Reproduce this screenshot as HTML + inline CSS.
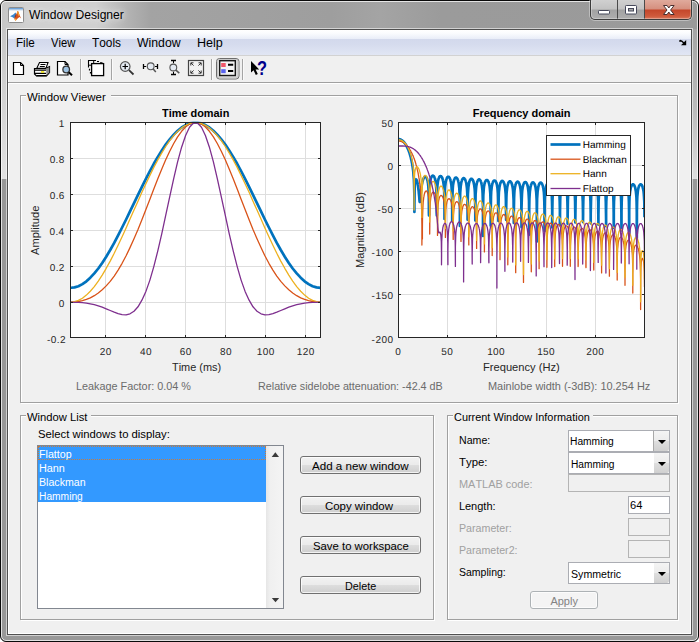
<!DOCTYPE html><html><head><meta charset="utf-8"><title>Window Designer</title><style>
*{box-sizing:border-box;margin:0;padding:0}
html,body{width:699px;height:642px;background:#fff;overflow:hidden}
body{position:relative;font-family:"Liberation Sans",sans-serif;font-size:11px;color:#000;font-kerning:none}
.a{position:absolute}
.t{position:absolute;white-space:nowrap;line-height:14px}
#win{left:0;top:0;width:699px;height:642px;border:1px solid #0a0a0a;border-radius:6px 6px 6px 6px;background:#989898;overflow:hidden}
#client{left:7px;top:29px;width:685px;height:606px;border:1px solid #505050;background:#f0f0f0}
.dis{color:#a0a0a0}
.wh{color:#fff}
.tk{color:#262626}
.gp{text-rendering:geometricPrecision}
.st{color:#6b6b6b}
.b{font-weight:bold}
.panel{border:1px solid #a0a0a0;box-shadow:1px 1px 0 #fff, inset 1px 1px 0 #fff}
.pt{background:#f0f0f0}
.btn{border:1px solid #707070;border-radius:3px;background:linear-gradient(#f2f2f2 0,#ebebeb 48%,#dddddd 52%,#cfcfcf 100%);box-shadow:inset 0 0 0 1px rgba(255,255,255,.75)}
.btnd{border:1px solid #adb2b5;border-radius:3px;background:#f4f4f4;box-shadow:inset 0 0 0 1px rgba(255,255,255,.75)}
.edit{border:1px solid #abadb3;background:#fff}
.editd{border:1px solid #b4b4b4;background:#f0f0f0}
.combo{border:1px solid #abadb3;background:#fff}
.cbtn{position:absolute;right:0;top:0;bottom:0;width:15px;border-radius:0 2px 2px 0;background:linear-gradient(#f4f4f4 0,#ececec 48%,#dedede 52%,#d0d0d0 100%)}
.cbtn.l{border-left:1px solid #a9a9a9;width:16px}
.cbtn:after{content:"";position:absolute;right:2.900px;top:8.800px;border:4.100px solid transparent;border-top:4.800px solid #000;border-bottom:0}
</style></head><body>
<div id="win" class="a">
<div class="a" style="left:0;top:0;width:697px;height:28px;background:linear-gradient(90deg,#c6c6c6 0,#d0d0d0 25px,#d0d0d0 95px,#b4b4b4 125px,#a3a3a3 150px,#9e9e9e 330px,#a4a4a4 380px,#9b9b9b 440px,#9a9a9a 100%)"></div>
<div class="a" style="left:0;top:28px;width:6px;height:150px;background:linear-gradient(#c6c6c6,#e2e2e2)"></div>
<div class="a" style="left:691px;top:28px;width:6px;height:150px;background:linear-gradient(#a4a4a4,#bcbcbc 55%,#dedede)"></div>
<div class="a" style="left:0;top:0;width:697px;height:640px;border:1px solid rgba(255,255,255,.72);border-radius:5px"></div>
<div class="a" style="left:5px;top:27px;width:687px;height:608px;border:1px solid rgba(255,255,255,.55)"></div>
</div>
<svg class="a" style="left:8px;top:7px" width="16" height="16" viewBox="0 0 16 16"><rect x=".5" y=".5" width="15" height="15" rx="1" fill="#fdfdfd" stroke="#8c8c8c"/><rect x="1" y="1" width="14" height="1.600" fill="#6fa3d8"/><rect x="1" y="2.600" width="14" height=".8" fill="#b9cfe6"/><path d="M2 9.200L5.300 7.400 7.500 5.600 8.400 7 6.300 11.500 4.600 10.200z" fill="#3a86cc"/><path d="M6.300 11.500L8.400 7 9.500 4.100 10.300 4.400 11.600 8.200 13.200 11.600 11.400 10 9.600 11.600 7.600 13.800 6.600 12.600z" fill="#d4501c"/><path d="M9 5.400L9.500 4.100 10.300 4.400 11.200 7.200 10.600 9.400 9.800 7.600z" fill="#f3a02c"/><path d="M6.600 12.600L8 11.200 8.600 12.600 7.600 13.800z" fill="#f6b63a"/><path d="M7.300 7.800L8.400 7 8 9.500 6.300 11.500z" fill="#8c3a2a"/></svg>
<div class="t" style="left:29.25px;top:8px;font-size:12px;transform:scale(1.0087,1);transform-origin:0 11px;text-shadow:0 0 5px #e8e8e8,0 0 8px #e8e8e8">Window Designer</div>
<div class="a" id="capbtns" style="left:590px;top:0;width:102px;height:20px;border:1px solid #3c3c3c;border-top:0;border-radius:0 0 5px 5px;overflow:hidden;background:linear-gradient(#d0d0d0,#c2c2c2 48%,#a2a2a2 52%,#aeaeae);box-shadow:0 0 0 1px rgba(255,255,255,.35)"><div class="a" style="left:26px;top:0;width:1px;height:19px;background:#4a4a4a"></div><div class="a" style="left:53px;top:0;width:1px;height:19px;background:#4a4a4a"></div><div class="a" style="left:54px;top:0;width:46px;height:19px;background:linear-gradient(#e0aa9c,#d58f7e 48%,#c4462a 52%,#cf5a3c 85%,#d87a5e)"></div><div class="a" style="left:0;top:1px;width:100px;height:18px;border:1px solid rgba(255,255,255,.3);border-top:0;border-radius:0 0 4px 4px"></div><svg class="a" style="left:-1px;top:0" width="102" height="19" viewBox="0 0 102 19"><rect x="8.500" y="10.500" width="11" height="3.500" rx=".8" fill="#fff" stroke="#45485a"/><rect x="35.500" y="5.500" width="11" height="8.500" rx=".8" fill="#fff" stroke="#45485a"/><rect x="38.500" y="8.500" width="5" height="2.500" fill="#a8a8a8" stroke="#45485a"/><path d="M73.500 5.500h3.600l1.700 2.500 1.700-2.500h3.600l-3.500 4.500 3.500 4.500h-3.600l-1.700-2.500-1.700 2.500h-3.600l3.500-4.500z" fill="#fff" stroke="#4a3030" stroke-width="1" stroke-linejoin="round"/></svg></div>
<div class="a" id="client"><div class="a" style="left:0;top:0;width:683px;height:604px;border:1px solid #fff"></div></div>
<div class="a" style="left:8px;top:30px;width:683px;height:25px;background:linear-gradient(#ffffff 0,#fbfcfe 12%,#e9edf8 35.900%,#d3d9ec 36%,#d6dcee 60%,#e1e6f4 100%)"></div>
<div class="a" style="left:8px;top:55px;width:683px;height:1px;background:#d2d2d2"></div>
<div class="t" style="left:15.54px;top:36px;font-size:12px;transform:scale(0.9709,1);transform-origin:0 11px;">File</div>
<div class="t" style="left:51.25px;top:36px;font-size:12px;transform:scale(0.9351,1);transform-origin:0 11px;">View</div>
<div class="t" style="left:92.33px;top:36px;font-size:12px;transform:scale(0.9881,1);transform-origin:0 11px;">Tools</div>
<div class="t" style="left:136.95px;top:36px;font-size:12px;transform:scale(1.0221,1);transform-origin:0 11px;">Window</div>
<div class="t" style="left:197.27px;top:36px;font-size:12px;transform:scale(1.0478,1);transform-origin:0 11px;">Help</div>
<svg class="a" style="left:678px;top:39px" width="9" height="7" viewBox="678 39 9 7"><path d="M679.300 41.300l1.200-.8 1.500.8 2 2" stroke="#000" stroke-width="1.400" fill="none"/><path d="M686.200 40v5.200h-5.200z" fill="#000"/></svg>
<div class="a" style="left:8px;top:82px;width:683px;height:1px;background:#a0a0a0"></div>
<div class="a" style="left:8px;top:83px;width:683px;height:1px;background:#fff"></div>
<svg class="a" id="tb" style="left:8px;top:56px" width="683" height="26" viewBox="8 56 683 26"><path d="M13.500 62.500h7l3 3v9h-10z" fill="#fff" stroke="#000" stroke-width="1.200"/><path d="M20.500 62.500v3h3" fill="none" stroke="#000"/><path d="M39.500 62.500H48L46 68.300H36.800Z" fill="#fff" stroke="#000" stroke-width="1.100"/><path d="M40.500 64.500h5M39.800 66.500h5" stroke="#000"/><path d="M34.500 68.500H45.500L49.500 66.700V72.500L46.500 76H36.500L34.500 74Z" fill="#fff" stroke="#000" stroke-width="1.200"/><path d="M46 68.700L49.300 67V72.400L46.500 75.500Z" fill="#8a8a8a"/><path d="M34.500 70.200H46M34.500 73.400H46M36.500 75.700H46.500" stroke="#000" stroke-width="1.200"/><rect x="41" y="71.200" width="3.200" height="1.500" fill="#f0e400"/><path d="M57.500 61.500h7.500l3 3v10.500h-10.500z" fill="#fff" stroke="#000" stroke-width="1.200"/><path d="M65 61.500v3h3" fill="none" stroke="#000"/><circle cx="66.200" cy="69.500" r="3.300" fill="#9fc4e4" stroke="#333" stroke-width="1.300"/><path d="M68.800 72.200l3.200 3" stroke="#000" stroke-width="2"/><path d="M80.500 59v21M111.500 59v21M211.500 59v21M242.500 59v21" stroke="#a5a5a5"/><path d="M81.500 59v21M112.500 59v21M212.500 59v21M243.500 59v21" stroke="#fafafa"/><path d="M88.500 67.500V60.500H96" stroke="#000" fill="none" stroke-width="1.100"/><path d="M93.700 60.500v3M88.500 65.200h3" stroke="#000"/><path d="M97 61.500h2M89.500 68.800v1.800M90.500 72v1.500M100 62.800h2.500" stroke="#000" stroke-width="1.200"/><rect x="91.600" y="63.600" width="12" height="12" fill="#fff" stroke="#000" stroke-width="1.300"/><circle cx="125.200" cy="66.500" r="4.800" fill="#e4eaf2" stroke="#555" stroke-width="1.200"/><path d="M122.500 66.500h5.500M125.200 63.800v5.500" stroke="#000" stroke-width="1.200"/><path d="M129 70.200l4.500 4.300" stroke="#333" stroke-width="1.800"/><circle cx="150.700" cy="66.300" r="3.400" fill="#e4eaf2" stroke="#555" stroke-width="1.100"/><path d="M153.200 69l2.600 3" stroke="#555" stroke-width="1.500"/><path d="M143.500 64v5M157.500 64v5" stroke="#000" stroke-width="1.300"/><path d="M144 66.500h2.200M155 66.500h2.200" stroke="#000"/><circle cx="173.300" cy="67.500" r="3.400" fill="#e4eaf2" stroke="#555" stroke-width="1.100"/><path d="M175.900 70.100l3.400 3" stroke="#555" stroke-width="1.500"/><path d="M171 60.500h5M171 74.500h5" stroke="#000" stroke-width="1.300"/><path d="M173.500 60.500v2.700M173.500 71.800v2.700" stroke="#000"/><rect x="188.500" y="60.500" width="15" height="15" fill="#f2f2f2" stroke="#444" stroke-width="1.200"/><path d="M190.800 65.500v-2.700h2.700M198.500 62.800h2.700v2.700M201.200 70.500v2.700h-2.700M193.500 73.200h-2.700v-2.700M191 63l2.600 2.600M201 63l-2.600 2.600M201 73l-2.600-2.600M191 73l2.600-2.600" fill="none" stroke="#222" stroke-width=".9"/><rect x="216.500" y="58.500" width="22.500" height="20.500" rx="3" fill="#d8d8d8" stroke="#6e6e6e" stroke-width="1"/><rect x="217.500" y="59.500" width="20.500" height="18.500" rx="2" fill="none" stroke="#c9c9c9" stroke-width="1"/><rect x="219.700" y="60.700" width="15.600" height="14.800" fill="#f4f4f4" stroke="#1a1a1a" stroke-width="1.400"/><rect x="221.200" y="63" width="4.500" height="4" fill="#f0586a"/><rect x="221.200" y="69.200" width="4.500" height="4" fill="#5a64f0"/><path d="M228 64.800h5.200M228 71.100h5.200" stroke="#000" stroke-width="2"/><path d="M251 61v11.500l2.600-2.300 2.200 4.800 2-1-2.200-4.600h3.600z" fill="#000"/><text x="257" y="75" textLength="10" lengthAdjust="spacingAndGlyphs" style="font:bold 20px 'Liberation Sans',sans-serif" fill="#00008c">?</text></svg>
<div class="a panel" style="left:20px;top:95px;width:658px;height:308px;"></div>
<div class="a pt" style="left:26px;top:89px;width:85px;height:12px;"></div>
<div class="t" style="left:26.85px;top:90px;font-size:11px;transform:scale(1.0388,1);transform-origin:0 11px;">Window Viewer</div>
<svg class="a" id="plots" style="left:0;top:110px" width="699" height="240" viewBox="0 110 699 240"><defs><clipPath id="c1"><rect x="71" y="121.500" width="249.500" height="216"/></clipPath><clipPath id="c2"><rect x="399" y="121.500" width="245.500" height="216"/></clipPath></defs><rect x="70.500" y="122.500" width="250" height="215" fill="#fff"/><rect x="398.500" y="122.500" width="246" height="215" fill="#fff"/><path d="M105.5 122.500V337.500M145.5 122.500V337.500M185.5 122.500V337.500M225.5 122.500V337.500M265.5 122.500V337.500M305.5 122.500V337.500M70.500 337.5H320.500M70.500 302.5H320.500M70.500 266.5H320.500M70.500 230.5H320.500M70.500 194.5H320.500M70.500 158.5H320.500M70.500 122.5H320.500M398.5 122.500V337.500M447.5 122.500V337.500M496.5 122.500V337.500M546.5 122.500V337.500M595.5 122.500V337.500M398.500 122.5H644.500M398.500 165.5H644.500M398.500 208.5H644.500M398.500 251.5H644.500M398.500 294.5H644.500M398.500 337.5H644.500" stroke="#dedede" fill="none"/><g clip-path="url(#c1)" fill="none" stroke-linejoin="round"><path d="M70.5 287.8L74.5 287.4L78.4 286.2L82.4 284.1L86.4 281.3L90.3 277.7L94.3 273.4L98.3 268.5L102.2 262.9L106.2 256.7L110.2 250.0L114.2 242.9L118.1 235.3L122.1 227.5L126.1 219.5L130.0 211.3L134.0 203.1L138.0 194.9L141.9 186.8L145.9 178.8L149.9 171.2L153.8 163.8L157.8 156.9L161.8 150.5L165.7 144.6L169.7 139.3L173.7 134.6L177.6 130.7L181.6 127.5L185.6 125.1L189.5 123.4L193.5 122.6L197.5 122.6L201.5 123.4L205.4 125.1L209.4 127.5L213.4 130.7L217.3 134.6L221.3 139.3L225.3 144.6L229.2 150.5L233.2 156.9L237.2 163.8L241.1 171.2L245.1 178.8L249.1 186.8L253.0 194.9L257.0 203.1L261.0 211.3L264.9 219.5L268.9 227.5L272.9 235.3L276.8 242.9L280.8 250.0L284.8 256.7L288.8 262.9L292.7 268.5L296.7 273.4L300.7 277.7L304.6 281.3L308.6 284.1L312.6 286.2L316.5 287.4L320.5 287.8" stroke="#0072BD" stroke-width="2.7"/><path d="M70.5 302.2L74.5 302.0L78.4 301.5L82.4 300.7L86.4 299.4L90.3 297.8L94.3 295.7L98.3 293.0L102.2 289.8L106.2 285.9L110.2 281.4L114.2 276.1L118.1 270.1L122.1 263.3L126.1 255.8L130.0 247.6L134.0 238.8L138.0 229.5L141.9 219.7L145.9 209.6L149.9 199.3L153.8 189.0L157.8 178.8L161.8 169.1L165.7 159.8L169.7 151.2L173.7 143.5L177.6 136.8L181.6 131.3L185.6 127.0L189.5 124.1L193.5 122.7L197.5 122.7L201.5 124.1L205.4 127.0L209.4 131.3L213.4 136.8L217.3 143.5L221.3 151.2L225.3 159.8L229.2 169.1L233.2 178.8L237.2 189.0L241.1 199.3L245.1 209.6L249.1 219.7L253.0 229.5L257.0 238.8L261.0 247.6L264.9 255.8L268.9 263.3L272.9 270.1L276.8 276.1L280.8 281.4L284.8 285.9L288.8 289.8L292.7 293.0L296.7 295.7L300.7 297.8L304.6 299.4L308.6 300.7L312.6 301.5L316.5 302.0L320.5 302.2" stroke="#D95319" stroke-width="1.3"/><path d="M70.5 302.2L74.5 301.7L78.4 300.4L82.4 298.2L86.4 295.1L90.3 291.2L94.3 286.6L98.3 281.1L102.2 275.1L106.2 268.3L110.2 261.1L114.2 253.3L118.1 245.2L122.1 236.7L126.1 227.9L130.0 219.0L134.0 210.1L138.0 201.2L141.9 192.3L145.9 183.7L149.9 175.4L153.8 167.4L157.8 159.9L161.8 152.9L165.7 146.5L169.7 140.7L173.7 135.7L177.6 131.4L181.6 127.9L185.6 125.3L189.5 123.5L193.5 122.6L197.5 122.6L201.5 123.5L205.4 125.3L209.4 127.9L213.4 131.4L217.3 135.7L221.3 140.7L225.3 146.5L229.2 152.9L233.2 159.9L237.2 167.4L241.1 175.4L245.1 183.7L249.1 192.3L253.0 201.2L257.0 210.1L261.0 219.0L264.9 227.9L268.9 236.7L272.9 245.2L276.8 253.3L280.8 261.1L284.8 268.3L288.8 275.1L292.7 281.1L296.7 286.6L300.7 291.2L304.6 295.1L308.6 298.2L312.6 300.4L316.5 301.7L320.5 302.2" stroke="#EDB120" stroke-width="1.3"/><path d="M70.5 302.2L74.5 302.3L78.4 302.4L82.4 302.7L86.4 303.1L90.3 303.8L94.3 304.7L98.3 305.8L102.2 307.2L106.2 308.8L110.2 310.5L114.2 312.2L118.1 313.7L122.1 314.6L126.1 314.8L130.0 313.8L134.0 311.2L138.0 306.8L141.9 300.2L145.9 291.4L149.9 280.1L153.8 266.6L157.8 250.9L161.8 233.7L165.7 215.4L169.7 196.8L173.7 178.7L177.6 161.9L181.6 147.2L185.6 135.5L189.5 127.3L193.5 123.0L197.5 123.0L201.5 127.3L205.4 135.5L209.4 147.2L213.4 161.9L217.3 178.7L221.3 196.8L225.3 215.4L229.2 233.7L233.2 250.9L237.2 266.6L241.1 280.1L245.1 291.4L249.1 300.2L253.0 306.8L257.0 311.2L261.0 313.8L264.9 314.8L268.9 314.6L272.9 313.7L276.8 312.2L280.8 310.5L284.8 308.8L288.8 307.2L292.7 305.8L296.7 304.7L300.7 303.8L304.6 303.1L308.6 302.7L312.6 302.4L316.5 302.3L320.5 302.2" stroke="#7E2F8E" stroke-width="1.3"/></g><g clip-path="url(#c2)" fill="none" stroke-linejoin="round"><path d="M398.5 139.1L398.7 139.1L399.0 139.2L399.2 139.2L399.5 139.2L399.7 139.3L399.9 139.3L400.2 139.4L400.4 139.5L400.7 139.6L400.9 139.7L401.1 139.8L401.4 140.0L401.6 140.1L401.9 140.3L402.1 140.4L402.3 140.6L402.6 140.8L402.8 141.0L403.1 141.2L403.3 141.5L403.5 141.7L403.8 142.0L404.0 142.2L404.3 142.5L404.5 142.8L404.7 143.1L405.0 143.5L405.2 143.8L405.5 144.2L405.7 144.6L405.9 144.9L406.2 145.4L406.4 145.8L406.7 146.2L406.9 146.7L407.1 147.2L407.4 147.7L407.6 148.2L407.9 148.7L408.1 149.3L408.4 149.9L408.6 150.5L408.8 151.2L409.1 151.8L409.3 152.5L409.6 153.2L409.8 154.0L410.0 154.8L410.3 155.6L410.5 156.5L410.8 157.4L411.0 158.4L411.2 159.4L411.5 160.5L411.7 161.6L412.0 162.9L412.2 164.2L412.4 165.6L412.7 167.2L412.9 168.9L413.2 170.8L413.4 173.1L413.6 175.8L413.9 179.2L414.1 184.3L414.4 196.3L414.4 200.7L414.4 212.0L414.4 205.3L414.5 198.9L414.6 190.3L414.8 184.6L415.1 182.1L415.3 180.7L415.6 179.9L415.8 179.5L416.0 179.4L416.0 179.4L416.3 179.6L416.5 179.9L416.8 180.4L417.0 181.1L417.2 181.9L417.5 183.0L417.7 184.2L418.0 185.6L418.2 187.2L418.4 189.1L418.7 191.2L418.9 193.7L419.2 196.4L419.4 199.2L419.6 201.4L419.8 201.9L419.8 201.9L419.8 201.9L419.9 201.9L419.9 201.9L420.1 200.4L420.4 197.9L420.6 195.1L420.8 192.6L421.1 190.3L421.3 188.3L421.6 186.6L421.8 185.1L422.0 183.8L422.3 182.6L422.5 181.6L422.8 180.7L423.0 179.9L423.2 179.2L423.5 178.6L423.7 178.1L424.0 177.7L424.2 177.3L424.4 177.0L424.7 176.8L424.9 176.7L425.2 176.6L425.3 176.6L425.4 176.6L425.6 176.7L425.9 176.9L426.1 177.1L426.4 177.4L426.6 177.9L426.9 178.4L427.1 179.1L427.3 179.9L427.6 180.9L427.8 182.2L428.1 183.8L428.3 186.1L428.5 189.4L428.8 196.0L428.9 205.4L428.9 212.9L429.0 215.4L429.0 206.2L429.0 202.2L429.3 191.3L429.5 187.1L429.7 184.4L430.0 182.5L430.2 181.1L430.5 179.9L430.7 178.9L430.9 178.2L431.2 177.5L431.4 177.0L431.7 176.6L431.9 176.2L432.1 176.0L432.4 175.8L432.6 175.7L432.9 175.6L433.1 175.7L433.3 175.8L433.6 176.0L433.8 176.2L434.1 176.6L434.3 177.0L434.5 177.5L434.8 178.2L435.0 179.0L435.3 180.0L435.5 181.1L435.7 182.6L436.0 184.6L436.2 187.3L436.5 191.8L436.7 205.3L436.7 212.7L436.8 215.4L436.8 206.2L436.8 202.2L436.9 194.9L437.2 188.9L437.4 185.6L437.7 183.4L437.9 181.8L438.1 180.6L438.4 179.5L438.6 178.7L438.9 178.0L439.1 177.5L439.3 177.0L439.6 176.7L439.8 176.4L440.1 176.2L440.3 176.1L440.5 176.1L440.8 176.1L441.0 176.2L441.3 176.4L441.5 176.6L441.7 177.0L442.0 177.4L442.2 177.9L442.5 178.6L442.7 179.3L442.9 180.3L443.2 181.4L443.4 182.8L443.7 184.7L443.9 187.2L444.2 191.2L444.4 200.4L444.4 203.2L444.5 207.5L444.5 218.9L444.5 211.7L444.5 205.2L444.6 197.7L444.9 190.4L445.1 186.8L445.4 184.5L445.6 182.7L445.8 181.4L446.1 180.4L446.3 179.5L446.6 178.8L446.8 178.2L447.0 177.8L447.3 177.4L447.5 177.1L447.8 176.9L448.0 176.8L448.2 176.8L448.3 176.8L448.5 176.8L448.7 176.9L449.0 177.0L449.2 177.3L449.4 177.6L449.7 178.0L449.9 178.5L450.2 179.2L450.4 179.9L450.6 180.8L450.9 182.0L451.1 183.3L451.4 185.1L451.6 187.6L451.8 191.3L452.1 199.2L452.1 204.0L452.2 208.4L452.2 220.8L452.2 212.0L452.3 205.8L452.3 200.1L452.6 191.7L452.8 187.9L453.0 185.4L453.3 183.6L453.5 182.3L453.8 181.2L454.0 180.3L454.2 179.6L454.5 179.0L454.7 178.5L455.0 178.2L455.2 177.9L455.4 177.7L455.7 177.5L455.9 177.5L456.0 177.5L456.2 177.5L456.4 177.6L456.6 177.8L456.9 178.0L457.1 178.3L457.4 178.7L457.6 179.2L457.8 179.8L458.1 180.6L458.3 181.5L458.6 182.6L458.8 183.9L459.0 185.7L459.3 188.1L459.5 191.6L459.8 198.9L459.9 206.0L459.9 211.8L459.9 226.0L459.9 209.8L460.0 205.1L460.0 202.2L460.2 192.8L460.5 188.8L460.7 186.3L461.0 184.5L461.2 183.1L461.4 182.0L461.7 181.1L461.9 180.3L462.2 179.7L462.4 179.3L462.7 178.9L462.9 178.6L463.1 178.4L463.4 178.2L463.6 178.2L463.7 178.2L463.9 178.2L464.1 178.3L464.3 178.4L464.6 178.7L464.8 179.0L465.1 179.4L465.3 179.9L465.5 180.5L465.8 181.2L466.0 182.1L466.3 183.2L466.5 184.5L466.7 186.2L467.0 188.6L467.2 192.0L467.5 198.9L467.5 205.1L467.6 209.3L467.6 219.7L467.6 214.4L467.7 207.6L467.7 204.1L467.9 193.8L468.2 189.6L468.4 187.1L468.7 185.2L468.9 183.8L469.1 182.7L469.4 181.8L469.6 181.0L469.9 180.4L470.1 179.9L470.3 179.6L470.6 179.3L470.8 179.0L471.1 178.9L471.3 178.8L471.4 178.8L471.5 178.8L471.8 178.9L472.0 179.1L472.3 179.3L472.5 179.6L472.7 180.0L473.0 180.5L473.2 181.1L473.5 181.8L473.7 182.7L473.9 183.7L474.2 185.1L474.4 186.8L474.7 189.1L474.9 192.5L475.1 199.0L475.3 208.1L475.3 214.9L475.3 220.5L475.4 209.9L475.4 205.7L475.6 194.6L475.9 190.4L476.1 187.8L476.3 185.9L476.6 184.5L476.8 183.3L477.1 182.4L477.3 181.7L477.5 181.1L477.8 180.6L478.0 180.2L478.3 179.9L478.5 179.6L478.7 179.5L479.0 179.4L479.1 179.4L479.2 179.4L479.5 179.5L479.7 179.6L479.9 179.9L480.2 180.2L480.4 180.6L480.7 181.0L480.9 181.6L481.2 182.4L481.4 183.2L481.6 184.3L481.9 185.6L482.1 187.3L482.4 189.5L482.6 192.9L482.8 199.2L483.0 207.6L483.0 212.9L483.0 235.9L483.0 212.3L483.1 207.2L483.3 195.4L483.6 191.1L483.8 188.4L484.0 186.5L484.3 185.1L484.5 183.9L484.8 183.0L485.0 182.2L485.2 181.6L485.5 181.1L485.7 180.7L486.0 180.4L486.2 180.2L486.4 180.0L486.7 180.0L486.8 180.0L486.9 180.0L487.2 180.0L487.4 180.2L487.6 180.4L487.9 180.7L488.1 181.1L488.4 181.6L488.6 182.1L488.8 182.9L489.1 183.7L489.3 184.8L489.6 186.1L489.8 187.8L490.0 190.0L490.3 193.3L490.5 199.5L490.6 207.3L490.7 211.8L490.7 225.7L490.7 214.6L490.8 208.6L491.0 196.1L491.2 191.7L491.5 189.0L491.7 187.1L492.0 185.6L492.2 184.5L492.4 183.5L492.7 182.8L492.9 182.2L493.2 181.6L493.4 181.2L493.6 180.9L493.9 180.7L494.1 180.5L494.4 180.5L494.5 180.5L494.6 180.5L494.8 180.5L495.1 180.7L495.3 180.9L495.6 181.2L495.8 181.6L496.0 182.0L496.3 182.6L496.5 183.3L496.8 184.2L497.0 185.2L497.2 186.5L497.5 188.2L497.7 190.4L498.0 193.7L498.2 199.7L498.3 207.1L498.4 211.2L498.4 220.9L498.4 217.1L498.4 209.9L498.7 196.7L498.9 192.2L499.2 189.5L499.4 187.6L499.7 186.1L499.9 185.0L500.1 184.0L500.4 183.3L500.6 182.6L500.9 182.1L501.1 181.7L501.3 181.4L501.6 181.2L501.8 181.0L502.1 180.9L502.2 180.9L502.3 180.9L502.5 181.0L502.8 181.1L503.0 181.3L503.3 181.6L503.5 182.0L503.7 182.5L504.0 183.0L504.2 183.8L504.5 184.6L504.7 185.6L504.9 186.9L505.2 188.6L505.4 190.8L505.7 194.0L505.9 200.0L506.0 210.8L506.1 218.6L506.1 219.8L506.1 211.2L506.2 207.3L506.4 197.2L506.6 192.7L506.9 190.0L507.1 188.0L507.3 186.6L507.6 185.4L507.8 184.5L508.1 183.7L508.3 183.1L508.5 182.5L508.8 182.1L509.0 181.8L509.3 181.6L509.5 181.4L509.7 181.3L509.9 181.3L510.0 181.3L510.2 181.4L510.5 181.5L510.7 181.7L510.9 182.0L511.2 182.4L511.4 182.9L511.7 183.4L511.9 184.1L512.1 185.0L512.4 186.0L512.6 187.3L512.9 189.0L513.1 191.1L513.3 194.3L513.6 200.2L513.7 210.5L513.8 217.2L513.8 223.0L513.8 212.4L513.9 208.1L514.1 197.8L514.3 193.2L514.5 190.4L514.8 188.5L515.0 187.0L515.3 185.8L515.5 184.9L515.7 184.1L516.0 183.5L516.2 182.9L516.5 182.5L516.7 182.2L516.9 182.0L517.2 181.8L517.4 181.7L517.6 181.7L517.7 181.7L517.9 181.8L518.2 181.9L518.4 182.1L518.6 182.4L518.9 182.8L519.1 183.2L519.4 183.8L519.6 184.5L519.8 185.3L520.1 186.4L520.3 187.7L520.6 189.3L520.8 191.5L521.0 194.6L521.3 200.4L521.4 210.3L521.5 216.3L521.5 227.3L521.5 213.5L521.5 208.9L521.8 198.2L522.0 193.6L522.2 190.8L522.5 188.8L522.7 187.4L523.0 186.2L523.2 185.2L523.4 184.5L523.7 183.8L523.9 183.3L524.2 182.9L524.4 182.6L524.6 182.3L524.9 182.2L525.1 182.1L525.3 182.1L525.4 182.1L525.6 182.1L525.8 182.2L526.1 182.4L526.3 182.7L526.6 183.1L526.8 183.6L527.0 184.1L527.3 184.8L527.5 185.7L527.8 186.7L528.0 188.0L528.2 189.6L528.5 191.8L528.7 194.9L529.0 200.6L529.1 210.2L529.1 215.7L529.2 234.6L529.2 214.6L529.2 209.6L529.4 198.6L529.7 194.0L529.9 191.2L530.2 189.2L530.4 187.7L530.6 186.5L530.9 185.6L531.1 184.8L531.4 184.1L531.6 183.6L531.8 183.2L532.1 182.9L532.3 182.6L532.6 182.5L532.8 182.4L533.0 182.4L533.0 182.4L533.3 182.4L533.5 182.6L533.8 182.8L534.0 183.0L534.2 183.4L534.5 183.9L534.7 184.4L535.0 185.1L535.2 186.0L535.5 187.0L535.7 188.3L535.9 189.9L536.2 192.0L536.4 195.2L536.7 200.8L536.8 210.1L536.8 215.2L536.9 241.4L536.9 215.6L536.9 210.3L537.1 199.0L537.4 194.3L537.6 191.5L537.9 189.5L538.1 188.0L538.3 186.8L538.6 185.9L538.8 185.1L539.1 184.4L539.3 183.9L539.5 183.5L539.8 183.2L540.0 182.9L540.3 182.8L540.5 182.7L540.7 182.7L540.7 182.7L541.0 182.7L541.2 182.8L541.5 183.0L541.7 183.3L541.9 183.7L542.2 184.1L542.4 184.7L542.7 185.4L542.9 186.2L543.1 187.3L543.4 188.5L543.6 190.1L543.9 192.3L544.1 195.4L544.3 201.0L544.5 210.0L544.5 214.8L544.5 231.1L544.6 216.7L544.6 211.0L544.8 199.4L545.1 194.6L545.3 191.8L545.5 189.8L545.8 188.3L546.0 187.1L546.3 186.1L546.5 185.4L546.7 184.7L547.0 184.2L547.2 183.8L547.5 183.4L547.7 183.2L547.9 183.0L548.2 182.9L548.4 182.9L548.4 182.9L548.7 183.0L548.9 183.1L549.1 183.3L549.4 183.6L549.6 183.9L549.9 184.4L550.1 185.0L550.3 185.6L550.6 186.5L550.8 187.5L551.1 188.8L551.3 190.4L551.5 192.5L551.8 195.6L552.0 201.2L552.2 210.0L552.2 214.5L552.2 227.4L552.3 217.7L552.3 211.6L552.5 199.7L552.7 194.9L553.0 192.1L553.2 190.1L553.5 188.6L553.7 187.4L554.0 186.4L554.2 185.6L554.4 185.0L554.7 184.4L554.9 184.0L555.2 183.7L555.4 183.4L555.6 183.3L555.9 183.2L556.1 183.1L556.1 183.2L556.4 183.2L556.6 183.3L556.8 183.5L557.1 183.8L557.3 184.2L557.6 184.6L557.8 185.2L558.0 185.9L558.3 186.7L558.5 187.7L558.8 189.0L559.0 190.6L559.2 192.7L559.5 195.8L559.7 201.3L559.9 209.9L559.9 214.2L559.9 225.2L560.0 218.8L560.0 212.2L560.2 200.0L560.4 195.2L560.7 192.3L560.9 190.3L561.2 188.8L561.4 187.6L561.6 186.6L561.9 185.8L562.1 185.2L562.4 184.7L562.6 184.2L562.8 183.9L563.1 183.7L563.3 183.5L563.6 183.4L563.8 183.4L563.8 183.4L564.0 183.4L564.3 183.5L564.5 183.7L564.8 184.0L565.0 184.4L565.2 184.8L565.5 185.4L565.7 186.1L566.0 186.9L566.2 187.9L566.4 189.2L566.7 190.8L566.9 192.9L567.2 196.0L567.4 201.4L567.6 209.9L567.6 214.0L567.6 223.7L567.6 219.8L567.7 212.7L567.9 200.3L568.1 195.4L568.4 192.5L568.6 190.5L568.8 189.0L569.1 187.8L569.3 186.8L569.6 186.0L569.8 185.4L570.0 184.9L570.3 184.4L570.5 184.1L570.8 183.8L571.0 183.7L571.2 183.6L571.5 183.5L571.5 183.6L571.7 183.6L572.0 183.7L572.2 183.9L572.5 184.2L572.7 184.5L572.9 185.0L573.2 185.6L573.4 186.2L573.7 187.1L573.9 188.1L574.1 189.3L574.4 190.9L574.6 193.0L574.9 196.1L575.1 201.5L575.2 209.8L575.3 213.8L575.3 222.5L575.3 220.9L575.4 213.2L575.6 200.5L575.8 195.6L576.1 192.7L576.3 190.7L576.5 189.2L576.8 188.0L577.0 187.0L577.3 186.2L577.5 185.6L577.7 185.0L578.0 184.6L578.2 184.3L578.5 184.0L578.7 183.8L578.9 183.7L579.1 183.7L579.2 183.7L579.4 183.8L579.7 183.9L579.9 184.1L580.1 184.3L580.4 184.7L580.6 185.2L580.9 185.7L581.1 186.4L581.3 187.2L581.6 188.2L581.8 189.5L582.1 191.1L582.3 193.2L582.5 196.2L582.8 201.6L583.0 213.6L583.0 221.6L583.0 222.1L583.1 213.7L583.1 209.9L583.3 200.7L583.5 195.8L583.7 192.9L584.0 190.9L584.2 189.4L584.5 188.1L584.7 187.2L584.9 186.4L585.2 185.7L585.4 185.2L585.7 184.8L585.9 184.4L586.1 184.2L586.4 184.0L586.6 183.9L586.8 183.9L586.9 183.9L587.1 183.9L587.3 184.0L587.6 184.2L587.8 184.5L588.1 184.8L588.3 185.3L588.5 185.9L588.8 186.5L589.0 187.4L589.3 188.4L589.5 189.6L589.7 191.2L590.0 193.3L590.2 196.3L590.5 201.7L590.7 213.4L590.7 220.9L590.7 223.3L590.7 214.2L590.8 210.2L591.0 200.9L591.2 196.0L591.4 193.1L591.7 191.0L591.9 189.5L592.2 188.3L592.4 187.3L592.6 186.5L592.9 185.9L593.1 185.3L593.4 184.9L593.6 184.6L593.8 184.3L594.1 184.1L594.3 184.0L594.5 184.0L594.6 184.0L594.8 184.0L595.0 184.2L595.3 184.3L595.5 184.6L595.8 185.0L596.0 185.4L596.2 186.0L596.5 186.6L596.7 187.5L597.0 188.5L597.2 189.7L597.4 191.3L597.7 193.4L597.9 196.4L598.2 201.7L598.3 213.2L598.4 220.2L598.4 224.7L598.4 214.7L598.5 210.5L598.6 201.1L598.9 196.1L599.1 193.2L599.4 191.2L599.6 189.6L599.8 188.4L600.1 187.4L600.3 186.6L600.6 186.0L600.8 185.4L601.0 185.0L601.3 184.7L601.5 184.4L601.8 184.2L602.0 184.1L602.2 184.1L602.2 184.1L602.5 184.1L602.7 184.3L603.0 184.4L603.2 184.7L603.4 185.1L603.7 185.5L603.9 186.1L604.2 186.7L604.4 187.6L604.6 188.6L604.9 189.8L605.1 191.4L605.4 193.5L605.6 196.5L605.8 201.8L606.0 213.0L606.1 219.6L606.1 226.2L606.1 215.1L606.1 210.8L606.3 201.2L606.6 196.2L606.8 193.3L607.0 191.3L607.3 189.7L607.5 188.5L607.8 187.5L608.0 186.7L608.2 186.1L608.5 185.5L608.7 185.1L609.0 184.8L609.2 184.5L609.5 184.3L609.7 184.2L609.9 184.2L609.9 184.2L610.2 184.2L610.4 184.3L610.7 184.5L610.9 184.8L611.1 185.2L611.4 185.6L611.6 186.1L611.9 186.8L612.1 187.6L612.3 188.6L612.6 189.9L612.8 191.4L613.1 193.5L613.3 196.5L613.5 201.8L613.7 212.8L613.7 219.1L613.8 228.0L613.8 215.5L613.8 211.1L614.0 201.4L614.3 196.3L614.5 193.4L614.7 191.4L615.0 189.8L615.2 188.6L615.5 187.6L615.7 186.8L615.9 186.2L616.2 185.6L616.4 185.2L616.7 184.8L616.9 184.6L617.1 184.4L617.4 184.3L617.6 184.3L617.9 184.3L618.1 184.4L618.3 184.6L618.6 184.9L618.8 185.2L619.1 185.7L619.3 186.2L619.5 186.9L619.8 187.7L620.0 188.7L620.3 189.9L620.5 191.5L620.7 193.6L621.0 196.6L621.2 201.8L621.4 212.7L621.4 218.6L621.5 230.3L621.5 216.0L621.5 211.4L621.7 201.5L621.9 196.4L622.2 193.5L622.4 191.4L622.7 189.9L622.9 188.7L623.1 187.7L623.4 186.9L623.6 186.2L623.9 185.7L624.1 185.2L624.3 184.9L624.6 184.6L624.8 184.5L625.1 184.3L625.3 184.3L625.5 184.4L625.8 184.5L626.0 184.6L626.3 184.9L626.5 185.3L626.8 185.7L627.0 186.3L627.2 186.9L627.5 187.7L627.7 188.7L628.0 190.0L628.2 191.5L628.4 193.6L628.7 196.6L628.9 201.8L629.1 212.5L629.1 218.1L629.2 233.4L629.2 216.4L629.2 211.6L629.4 201.6L629.6 196.5L629.9 193.5L630.1 191.5L630.4 189.9L630.6 188.7L630.8 187.7L631.1 186.9L631.3 186.3L631.6 185.7L631.8 185.3L632.0 184.9L632.3 184.7L632.5 184.5L632.8 184.4L633.0 184.3L633.2 184.4L633.5 184.5L633.7 184.7L634.0 184.9L634.2 185.3L634.4 185.7L634.7 186.3L634.9 186.9L635.2 187.8L635.4 188.8L635.6 190.0L635.9 191.5L636.1 193.6L636.4 196.6L636.6 201.8L636.8 212.3L636.8 217.7L636.8 238.6L636.9 216.8L636.9 211.8L637.1 201.7L637.3 196.5L637.6 193.6L637.8 191.5L638.0 190.0L638.3 188.7L638.5 187.8L638.8 186.9L639.0 186.3L639.2 185.7L639.5 185.3L639.7 185.0L640.0 184.7L640.2 184.5L640.4 184.4L640.7 184.4L640.9 184.4L641.2 184.5L641.4 184.7L641.6 185.0L641.9 185.3L642.1 185.7L642.4 186.3L642.6 187.0L642.8 187.8L643.1 188.8L643.3 190.0L643.6 191.5L643.8 193.6L644.0 196.6L644.3 201.7L644.5 217.2" stroke="#0072BD" stroke-width="2.7"/><path d="M398.5 141.0L398.7 141.0L399.0 141.0L399.2 141.1L399.5 141.1L399.7 141.1L399.9 141.2L400.2 141.2L400.4 141.3L400.7 141.3L400.9 141.4L401.1 141.5L401.4 141.5L401.6 141.6L401.9 141.7L402.1 141.8L402.3 141.9L402.6 142.1L402.8 142.2L403.1 142.3L403.3 142.5L403.5 142.6L403.8 142.8L404.0 142.9L404.3 143.1L404.5 143.3L404.7 143.5L405.0 143.7L405.2 143.9L405.5 144.1L405.7 144.3L405.9 144.5L406.2 144.8L406.4 145.0L406.7 145.3L406.9 145.5L407.1 145.8L407.4 146.1L407.6 146.4L407.9 146.7L408.1 147.0L408.4 147.3L408.6 147.7L408.8 148.0L409.1 148.3L409.3 148.7L409.6 149.1L409.8 149.5L410.0 149.9L410.3 150.3L410.5 150.7L410.8 151.1L411.0 151.5L411.2 152.0L411.5 152.5L411.7 152.9L412.0 153.4L412.2 153.9L412.4 154.5L412.7 155.0L412.9 155.6L413.2 156.1L413.4 156.7L413.6 157.3L413.9 157.9L414.1 158.6L414.4 159.2L414.6 159.9L414.8 160.6L415.1 161.4L415.3 162.1L415.6 162.9L415.8 163.7L416.0 164.5L416.3 165.4L416.5 166.3L416.8 167.2L417.0 168.2L417.2 169.2L417.5 170.2L417.7 171.3L418.0 172.5L418.2 173.7L418.4 174.9L418.7 176.3L418.9 177.7L419.2 179.2L419.4 180.9L419.6 182.6L419.9 184.5L420.1 186.6L420.4 188.9L420.6 191.6L420.8 194.6L421.1 198.2L421.3 202.7L421.6 208.9L421.8 220.0L421.9 225.8L421.9 230.9L421.9 245.1L422.0 234.9L422.0 229.6L422.0 225.4L422.1 223.8L422.3 228.2L422.3 231.4L422.3 239.0L422.4 238.9L422.4 230.2L422.5 219.0L422.8 210.3L423.0 205.4L423.2 202.1L423.5 199.6L423.7 197.7L424.0 196.2L424.2 194.9L424.4 193.9L424.7 193.1L424.9 192.5L425.2 191.9L425.4 191.5L425.6 191.3L425.9 191.1L426.1 191.0L426.2 191.0L426.4 191.0L426.6 191.1L426.9 191.4L427.1 191.7L427.3 192.1L427.6 192.6L427.8 193.3L428.1 194.1L428.3 195.1L428.5 196.3L428.8 197.9L429.0 200.0L429.3 203.0L429.5 208.1L429.7 217.8L429.7 222.2L429.7 234.1L429.8 226.1L429.8 219.7L430.0 208.7L430.2 203.5L430.5 200.5L430.7 198.5L430.9 197.0L431.2 195.8L431.4 194.9L431.7 194.2L431.9 193.6L432.1 193.1L432.4 192.7L432.6 192.5L432.9 192.3L433.1 192.2L433.3 192.1L433.3 192.1L433.6 192.2L433.8 192.3L434.1 192.5L434.3 192.7L434.5 193.1L434.8 193.5L435.0 194.0L435.3 194.6L435.5 195.3L435.7 196.1L436.0 197.1L436.2 198.3L436.5 199.8L436.7 201.7L436.9 204.2L437.2 208.0L437.4 215.9L437.5 220.5L437.5 224.8L437.5 235.4L437.6 229.7L437.6 223.0L437.7 217.2L437.9 208.7L438.1 204.9L438.4 202.5L438.6 200.9L438.9 199.6L439.1 198.6L439.3 197.7L439.6 197.1L439.8 196.6L440.1 196.2L440.3 195.9L440.5 195.7L440.8 195.5L441.0 195.5L441.1 195.5L441.3 195.5L441.5 195.6L441.7 195.7L442.0 196.0L442.2 196.3L442.5 196.6L442.7 197.1L442.9 197.6L443.2 198.3L443.4 199.1L443.7 200.0L443.9 201.1L444.2 202.4L444.4 204.0L444.6 206.2L444.9 209.2L445.1 214.2L445.3 223.7L445.3 227.8L445.4 237.4L445.4 233.8L445.4 226.6L445.6 215.1L445.8 209.9L446.1 207.0L446.3 205.0L446.6 203.5L446.8 202.4L447.0 201.4L447.3 200.7L447.5 200.1L447.8 199.7L448.0 199.3L448.2 199.1L448.5 198.9L448.7 198.8L449.0 198.7L449.2 198.8L449.4 198.9L449.7 199.1L449.9 199.3L450.2 199.6L450.4 200.0L450.6 200.5L450.9 201.1L451.1 201.8L451.4 202.6L451.6 203.6L451.8 204.8L452.1 206.3L452.3 208.1L452.6 210.6L452.8 214.4L453.0 222.1L453.1 226.6L453.1 230.5L453.2 239.4L453.2 237.7L453.2 230.0L453.3 223.9L453.5 215.2L453.8 211.4L454.0 209.0L454.2 207.3L454.5 205.9L454.7 204.9L455.0 204.1L455.2 203.4L455.4 202.9L455.7 202.5L455.9 202.2L456.2 201.9L456.4 201.8L456.6 201.7L456.8 201.7L456.9 201.7L457.1 201.8L457.4 201.9L457.6 202.1L457.8 202.4L458.1 202.7L458.3 203.2L458.6 203.7L458.8 204.3L459.0 205.1L459.3 206.0L459.5 207.0L459.8 208.3L460.0 209.9L460.2 212.1L460.5 215.0L460.7 220.0L460.9 233.0L461.0 241.1L461.0 241.4L461.0 233.1L461.1 229.3L461.2 221.1L461.4 215.8L461.7 212.8L461.9 210.8L462.2 209.3L462.4 208.1L462.7 207.2L462.9 206.5L463.1 205.9L463.4 205.4L463.6 205.0L463.9 204.7L464.1 204.5L464.3 204.4L464.6 204.4L464.6 204.3L464.8 204.4L465.1 204.5L465.3 204.6L465.5 204.9L465.8 205.2L466.0 205.5L466.3 206.0L466.5 206.6L466.7 207.3L467.0 208.1L467.2 209.0L467.5 210.2L467.7 211.6L467.9 213.4L468.2 215.9L468.4 219.6L468.7 227.2L468.7 235.2L468.8 242.8L468.8 244.9L468.8 236.0L468.9 232.0L468.9 229.4L469.1 220.5L469.4 216.7L469.6 214.3L469.9 212.5L470.1 211.2L470.3 210.1L470.6 209.3L470.8 208.6L471.1 208.1L471.3 207.6L471.5 207.3L471.8 207.0L472.0 206.9L472.3 206.8L472.5 206.7L472.5 206.7L472.7 206.8L473.0 206.9L473.2 207.1L473.5 207.4L473.7 207.7L473.9 208.1L474.2 208.6L474.4 209.2L474.7 210.0L474.9 210.8L475.1 211.9L475.4 213.2L475.6 214.8L475.9 216.9L476.1 219.8L476.3 224.7L476.6 237.2L476.6 244.3L476.6 248.4L476.6 238.6L476.7 234.5L476.8 226.0L477.1 220.6L477.3 217.6L477.5 215.6L477.8 214.1L478.0 212.9L478.3 211.9L478.5 211.2L478.7 210.5L479.0 210.1L479.2 209.7L479.5 209.4L479.7 209.1L479.9 209.0L480.2 208.9L480.3 208.9L480.4 208.9L480.7 209.0L480.9 209.2L481.2 209.4L481.4 209.7L481.6 210.0L481.9 210.5L482.1 211.1L482.4 211.7L482.6 212.5L482.8 213.5L483.1 214.6L483.3 216.0L483.6 217.8L483.8 220.3L484.0 223.9L484.3 231.4L484.4 239.0L484.4 245.7L484.4 251.9L484.5 241.0L484.5 236.8L484.5 234.1L484.8 225.0L485.0 221.1L485.2 218.6L485.5 216.8L485.7 215.5L486.0 214.4L486.2 213.6L486.4 212.9L486.7 212.3L486.9 211.9L487.2 211.5L487.4 211.3L487.6 211.1L487.9 211.0L488.1 210.9L488.4 211.0L488.6 211.1L488.8 211.3L489.1 211.5L489.3 211.8L489.6 212.2L489.8 212.7L490.0 213.3L490.3 214.1L490.5 214.9L490.8 216.0L491.0 217.2L491.2 218.8L491.5 220.9L491.7 223.8L492.0 228.6L492.2 240.7L492.2 246.9L492.2 255.6L492.3 243.3L492.3 238.9L492.4 230.2L492.7 224.7L492.9 221.7L493.2 219.6L493.4 218.0L493.6 216.8L493.9 215.9L494.1 215.1L494.4 214.5L494.6 214.0L494.8 213.6L495.1 213.3L495.3 213.0L495.6 212.9L495.8 212.8L495.9 212.8L496.0 212.8L496.3 212.9L496.5 213.0L496.8 213.2L497.0 213.5L497.2 213.9L497.5 214.3L497.7 214.8L498.0 215.5L498.2 216.3L498.4 217.2L498.7 218.3L498.9 219.7L499.2 221.5L499.4 223.9L499.7 227.6L499.9 234.9L500.0 242.2L500.0 248.1L500.0 259.7L500.1 245.5L500.1 240.9L500.1 238.1L500.4 228.8L500.6 224.8L500.9 222.3L501.1 220.5L501.3 219.2L501.6 218.1L501.8 217.2L502.1 216.5L502.3 216.0L502.5 215.5L502.8 215.1L503.0 214.9L503.3 214.7L503.5 214.6L503.7 214.5L503.8 214.5L504.0 214.6L504.2 214.6L504.5 214.8L504.7 215.1L504.9 215.4L505.2 215.8L505.4 216.3L505.7 216.9L505.9 217.6L506.1 218.4L506.4 219.4L506.6 220.7L506.9 222.3L507.1 224.3L507.3 227.2L507.6 232.0L507.8 243.6L507.8 249.2L507.8 264.8L507.9 247.6L507.9 242.8L508.1 233.8L508.3 228.2L508.5 225.1L508.8 223.0L509.0 221.5L509.3 220.3L509.5 219.3L509.7 218.5L510.0 217.9L510.2 217.4L510.5 217.0L510.7 216.6L510.9 216.4L511.2 216.2L511.4 216.2L511.6 216.1L511.7 216.2L511.9 216.2L512.1 216.3L512.4 216.5L512.6 216.8L512.9 217.2L513.1 217.6L513.3 218.1L513.6 218.8L513.8 219.6L514.1 220.5L514.3 221.6L514.5 223.0L514.8 224.8L515.0 227.2L515.3 230.8L515.5 238.0L515.6 244.9L515.6 250.3L515.7 272.7L515.7 249.6L515.7 244.6L515.7 241.6L516.0 232.1L516.2 228.1L516.5 225.6L516.7 223.8L516.9 222.4L517.2 221.3L517.4 220.5L517.7 219.7L517.9 219.2L518.2 218.7L518.4 218.3L518.6 218.1L518.9 217.9L519.1 217.7L519.4 217.7L519.4 217.7L519.6 217.7L519.8 217.8L520.1 218.0L520.3 218.2L520.6 218.5L520.8 218.9L521.0 219.4L521.3 220.0L521.5 220.7L521.8 221.5L522.0 222.5L522.2 223.8L522.5 225.3L522.7 227.3L523.0 230.2L523.2 235.0L523.4 246.2L523.4 251.3L523.5 282.4L523.5 251.5L523.5 246.3L523.7 236.9L523.9 231.3L524.2 228.2L524.4 226.1L524.6 224.6L524.9 223.3L525.1 222.4L525.4 221.6L525.6 220.9L525.8 220.4L526.1 220.0L526.3 219.6L526.6 219.4L526.8 219.2L527.0 219.2L527.2 219.1L527.3 219.1L527.5 219.2L527.8 219.3L528.0 219.5L528.2 219.8L528.5 220.1L528.7 220.6L529.0 221.1L529.2 221.7L529.4 222.5L529.7 223.4L529.9 224.5L530.2 225.9L530.4 227.7L530.6 230.0L530.9 233.6L531.1 240.7L531.2 247.4L531.2 252.3L531.3 271.8L531.3 253.5L531.3 248.0L531.4 244.9L531.6 235.1L531.8 231.0L532.1 228.5L532.3 226.7L532.6 225.3L532.8 224.2L533.0 223.4L533.3 222.6L533.5 222.0L533.8 221.6L534.0 221.2L534.2 220.9L534.5 220.7L534.7 220.6L535.0 220.5L535.0 220.5L535.2 220.6L535.5 220.6L535.7 220.8L535.9 221.0L536.2 221.3L536.4 221.7L536.7 222.2L536.9 222.8L537.1 223.5L537.4 224.3L537.6 225.3L537.9 226.5L538.1 228.1L538.3 230.1L538.6 233.0L538.8 237.7L539.0 248.5L539.1 253.2L539.1 268.7L539.1 255.4L539.1 249.6L539.3 239.9L539.5 234.2L539.8 231.1L540.0 228.9L540.3 227.4L540.5 226.1L540.7 225.1L541.0 224.3L541.2 223.7L541.5 223.2L541.7 222.7L541.9 222.4L542.2 222.2L542.4 222.0L542.7 221.9L542.8 221.9L542.9 221.9L543.1 221.9L543.4 222.1L543.6 222.2L543.9 222.5L544.1 222.8L544.3 223.3L544.6 223.8L544.8 224.4L545.1 225.2L545.3 226.1L545.5 227.2L545.8 228.6L546.0 230.3L546.3 232.7L546.5 236.2L546.7 243.2L546.8 249.6L546.9 254.1L546.9 267.3L546.9 257.3L547.0 251.2L547.0 247.9L547.2 237.8L547.5 233.8L547.7 231.2L547.9 229.4L548.2 228.0L548.4 226.9L548.7 226.0L548.9 225.3L549.1 224.7L549.4 224.3L549.6 223.9L549.9 223.6L550.1 223.4L550.3 223.3L550.6 223.2L550.7 223.2L550.8 223.2L551.1 223.3L551.3 223.4L551.5 223.7L551.8 224.0L552.0 224.4L552.3 224.8L552.5 225.4L552.7 226.1L553.0 226.9L553.2 227.9L553.5 229.2L553.7 230.7L554.0 232.7L554.2 235.5L554.4 240.2L554.6 250.7L554.7 255.1L554.7 266.6L554.7 259.2L554.8 252.8L554.9 242.6L555.2 236.9L555.4 233.7L555.6 231.6L555.9 230.0L556.1 228.8L556.4 227.8L556.6 227.0L556.8 226.3L557.1 225.8L557.3 225.4L557.6 225.0L557.8 224.8L558.0 224.6L558.3 224.5L558.5 224.5L558.5 224.5L558.8 224.5L559.0 224.6L559.2 224.8L559.5 225.1L559.7 225.4L560.0 225.9L560.2 226.4L560.4 227.0L560.7 227.8L560.9 228.7L561.2 229.8L561.4 231.2L561.6 232.9L561.9 235.2L562.1 238.7L562.4 245.6L562.4 251.8L562.5 256.0L562.5 266.3L562.5 261.2L562.6 254.3L562.6 250.8L562.8 240.5L563.1 236.4L563.3 233.9L563.6 232.0L563.8 230.6L564.0 229.5L564.3 228.6L564.5 227.9L564.8 227.3L565.0 226.8L565.2 226.5L565.5 226.2L565.7 226.0L566.0 225.8L566.2 225.8L566.3 225.8L566.4 225.8L566.7 225.9L566.9 226.0L567.2 226.2L567.4 226.5L567.6 226.9L567.9 227.4L568.1 228.0L568.4 228.7L568.6 229.5L568.8 230.5L569.1 231.7L569.3 233.2L569.6 235.2L569.8 238.0L570.0 242.7L570.3 252.9L570.3 256.9L570.3 266.3L570.3 263.2L570.4 255.9L570.5 245.4L570.8 239.5L571.0 236.3L571.2 234.2L571.5 232.6L571.7 231.4L572.0 230.4L572.2 229.6L572.5 228.9L572.7 228.4L572.9 227.9L573.2 227.6L573.4 227.4L573.7 227.2L573.9 227.1L574.1 227.1L574.1 227.1L574.4 227.1L574.6 227.2L574.9 227.4L575.1 227.7L575.3 228.0L575.6 228.4L575.8 229.0L576.1 229.6L576.3 230.3L576.5 231.3L576.8 232.4L577.0 233.7L577.3 235.5L577.5 237.8L577.7 241.3L578.0 248.0L578.1 254.0L578.1 257.9L578.1 266.5L578.2 265.3L578.2 257.5L578.2 253.8L578.5 243.2L578.7 239.1L578.9 236.5L579.2 234.7L579.4 233.3L579.7 232.2L579.9 231.3L580.1 230.5L580.4 229.9L580.6 229.5L580.9 229.1L581.1 228.8L581.3 228.6L581.6 228.5L581.8 228.4L581.9 228.4L582.1 228.4L582.3 228.5L582.5 228.6L582.8 228.9L583.0 229.2L583.3 229.5L583.5 230.0L583.7 230.6L584.0 231.3L584.2 232.1L584.5 233.1L584.7 234.3L584.9 235.9L585.2 237.9L585.4 240.6L585.7 245.2L585.9 258.9L585.9 266.9L586.0 267.6L586.0 259.2L586.0 255.3L586.1 248.2L586.4 242.2L586.6 239.0L586.9 236.9L587.1 235.3L587.3 234.0L587.6 233.1L587.8 232.2L588.1 231.6L588.3 231.1L588.5 230.6L588.8 230.3L589.0 230.1L589.3 229.9L589.5 229.8L589.7 229.8L589.7 229.8L590.0 229.8L590.2 229.9L590.5 230.1L590.7 230.4L591.0 230.7L591.2 231.2L591.4 231.7L591.7 232.3L591.9 233.1L592.2 234.0L592.4 235.1L592.6 236.5L592.9 238.2L593.1 240.5L593.4 244.0L593.6 250.6L593.7 260.0L593.7 267.5L593.8 270.1L593.8 260.9L593.8 256.9L594.1 246.1L594.3 241.9L594.6 239.3L594.8 237.5L595.0 236.1L595.3 235.0L595.5 234.1L595.8 233.4L596.0 232.8L596.2 232.3L596.5 231.9L596.7 231.6L597.0 231.4L597.2 231.3L597.4 231.3L597.5 231.3L597.7 231.3L597.9 231.4L598.2 231.5L598.4 231.7L598.6 232.1L598.9 232.4L599.1 232.9L599.4 233.5L599.6 234.2L599.8 235.0L600.1 236.0L600.3 237.3L600.6 238.8L600.8 240.8L601.0 243.6L601.3 248.1L601.5 261.3L601.6 268.3L601.6 272.9L601.6 262.8L601.6 258.7L601.8 251.3L602.0 245.3L602.2 242.1L602.5 239.9L602.7 238.3L603.0 237.1L603.2 236.1L603.4 235.3L603.7 234.7L603.9 234.1L604.2 233.7L604.4 233.4L604.6 233.2L604.9 233.0L605.1 232.9L605.3 232.9L605.4 232.9L605.6 233.0L605.8 233.1L606.1 233.3L606.3 233.6L606.6 233.9L606.8 234.3L607.0 234.9L607.3 235.5L607.5 236.3L607.8 237.2L608.0 238.3L608.2 239.7L608.5 241.4L608.7 243.7L609.0 247.2L609.2 253.8L609.3 262.8L609.4 269.3L609.4 276.2L609.4 264.9L609.5 260.7L609.7 249.5L609.9 245.3L610.2 242.7L610.4 240.9L610.7 239.5L610.9 238.4L611.1 237.5L611.4 236.8L611.6 236.2L611.9 235.8L612.1 235.4L612.3 235.1L612.6 234.9L612.8 234.8L613.1 234.8L613.1 234.8L613.3 234.8L613.5 234.9L613.8 235.1L614.0 235.3L614.3 235.6L614.5 236.1L614.7 236.5L615.0 237.1L615.2 237.9L615.5 238.7L615.7 239.7L615.9 241.0L616.2 242.5L616.4 244.5L616.7 247.3L616.9 251.8L617.1 264.6L617.2 270.8L617.2 280.1L617.2 267.4L617.3 262.9L617.4 255.3L617.6 249.2L617.9 246.0L618.1 243.9L618.3 242.3L618.6 241.1L618.8 240.1L619.1 239.3L619.3 238.7L619.5 238.2L619.8 237.8L620.0 237.5L620.3 237.3L620.5 237.1L620.7 237.1L620.8 237.1L621.0 237.1L621.2 237.2L621.5 237.3L621.7 237.6L621.9 237.9L622.2 238.2L622.4 238.7L622.7 239.3L622.9 239.9L623.1 240.7L623.4 241.7L623.6 242.8L623.9 244.2L624.1 246.0L624.3 248.3L624.6 251.8L624.8 258.3L624.9 267.0L625.0 272.8L625.0 285.3L625.0 270.5L625.1 265.8L625.3 254.4L625.5 250.2L625.8 247.6L626.0 245.8L626.3 244.4L626.5 243.4L626.8 242.5L627.0 241.9L627.2 241.3L627.5 240.9L627.7 240.6L628.0 240.4L628.2 240.3L628.4 240.2L628.5 240.2L628.7 240.2L628.9 240.3L629.2 240.4L629.4 240.7L629.6 241.0L629.9 241.3L630.1 241.8L630.4 242.4L630.6 243.0L630.8 243.8L631.1 244.7L631.3 245.8L631.6 247.1L631.8 248.7L632.0 250.8L632.3 253.6L632.5 258.2L632.8 270.6L632.8 276.2L632.8 293.0L632.8 274.8L632.9 270.0L633.0 262.1L633.2 256.0L633.5 252.9L633.7 250.8L634.0 249.3L634.2 248.2L634.4 247.3L634.7 246.6L634.9 246.1L635.2 245.7L635.4 245.5L635.6 245.3L635.9 245.2L636.0 245.2L636.1 245.2L636.4 245.3L636.6 245.4L636.8 245.7L637.1 246.0L637.3 246.4L637.6 246.8L637.8 247.4L638.0 248.0L638.3 248.8L638.5 249.7L638.8 250.7L639.0 251.9L639.2 253.2L639.5 254.9L639.7 256.9L640.0 259.6L640.2 263.3L640.4 270.0L640.6 278.5L640.6 283.9L640.6 309.5L640.7 283.5L640.7 278.5L640.9 267.1L641.2 263.3L641.4 261.2L641.6 259.8L641.9 259.0L642.1 258.6L642.4 258.4L642.4 258.4L642.6 258.5L642.8 258.9L643.1 259.5L643.3 260.4L643.6 261.8L643.8 263.7L644.0 266.5L644.3 271.6L644.5 287.1" stroke="#D95319" stroke-width="1.3"/><path d="M398.5 139.7L398.7 139.7L399.0 139.7L399.2 139.8L399.5 139.8L399.7 139.8L399.9 139.9L400.2 140.0L400.4 140.0L400.7 140.1L400.9 140.2L401.1 140.3L401.4 140.4L401.6 140.5L401.9 140.6L402.1 140.8L402.3 140.9L402.6 141.1L402.8 141.2L403.1 141.4L403.3 141.6L403.5 141.8L403.8 142.0L404.0 142.2L404.3 142.5L404.5 142.7L404.7 142.9L405.0 143.2L405.2 143.5L405.5 143.8L405.7 144.1L405.9 144.4L406.2 144.7L406.4 145.1L406.7 145.4L406.9 145.8L407.1 146.2L407.4 146.6L407.6 147.0L407.9 147.5L408.1 147.9L408.4 148.4L408.6 148.9L408.8 149.4L409.1 150.0L409.3 150.6L409.6 151.2L409.8 151.8L410.0 152.4L410.3 153.1L410.5 153.9L410.8 154.7L411.0 155.5L411.2 156.4L411.5 157.3L411.7 158.3L412.0 159.4L412.2 160.6L412.4 161.9L412.7 163.4L412.9 165.1L413.2 167.1L413.4 169.7L413.6 173.1L413.9 178.6L414.1 188.9L414.1 193.7L414.1 210.1L414.1 195.7L414.2 190.1L414.4 179.7L414.6 174.9L414.8 172.3L415.1 170.6L415.3 169.4L415.6 168.5L415.8 167.9L416.0 167.5L416.3 167.1L416.5 166.9L416.8 166.8L416.9 166.8L417.0 166.8L417.2 166.8L417.5 167.0L417.7 167.2L418.0 167.4L418.2 167.8L418.4 168.1L418.7 168.6L418.9 169.1L419.2 169.7L419.4 170.4L419.6 171.2L419.9 172.1L420.1 173.1L420.4 174.3L420.6 175.6L420.8 177.3L421.1 179.3L421.3 182.0L421.6 186.0L421.8 194.2L421.9 199.1L421.9 203.7L421.9 217.4L422.0 206.6L422.0 200.6L422.0 195.1L422.3 187.0L422.5 183.4L422.8 181.2L423.0 179.6L423.2 178.4L423.5 177.6L423.7 176.9L424.0 176.4L424.2 176.0L424.4 175.7L424.7 175.5L424.9 175.4L425.1 175.4L425.2 175.4L425.4 175.5L425.6 175.6L425.9 175.8L426.1 176.0L426.4 176.4L426.6 176.7L426.9 177.2L427.1 177.8L427.3 178.4L427.6 179.2L427.8 180.0L428.1 181.0L428.3 182.2L428.5 183.6L428.8 185.4L429.0 187.6L429.3 190.7L429.5 195.9L429.7 205.7L429.7 210.1L429.7 222.1L429.8 214.1L429.8 207.7L430.0 196.7L430.2 191.7L430.5 188.8L430.7 186.9L430.9 185.5L431.2 184.4L431.4 183.6L431.7 183.0L431.9 182.5L432.1 182.1L432.4 181.8L432.6 181.6L432.9 181.5L433.1 181.4L433.3 181.5L433.6 181.6L433.8 181.7L434.1 182.0L434.3 182.3L434.5 182.7L434.8 183.1L435.0 183.7L435.3 184.3L435.5 185.1L435.7 186.0L436.0 187.0L436.2 188.3L436.5 189.8L436.7 191.7L436.9 194.2L437.2 198.1L437.4 206.0L437.5 210.7L437.5 214.9L437.5 225.6L437.6 219.9L437.6 213.2L437.7 207.4L437.9 198.9L438.1 195.2L438.4 192.9L438.6 191.2L438.9 189.9L439.1 189.0L439.3 188.2L439.6 187.6L439.8 187.1L440.1 186.7L440.3 186.4L440.5 186.3L440.8 186.1L441.0 186.1L441.3 186.2L441.5 186.3L441.7 186.4L442.0 186.7L442.2 187.0L442.5 187.4L442.7 187.9L442.9 188.4L443.2 189.1L443.4 189.9L443.7 190.8L443.9 191.9L444.2 193.3L444.4 194.9L444.6 197.1L444.9 200.1L445.1 205.2L445.3 214.7L445.3 218.8L445.4 228.4L445.4 224.8L445.4 217.6L445.6 206.2L445.8 201.0L446.1 198.0L446.3 196.1L446.6 194.6L446.8 193.5L447.0 192.6L447.3 191.9L447.5 191.3L447.8 190.8L448.0 190.5L448.2 190.2L448.5 190.1L448.7 190.0L448.9 190.0L449.0 190.0L449.2 190.0L449.4 190.1L449.7 190.3L449.9 190.6L450.2 190.9L450.4 191.4L450.6 191.9L450.9 192.5L451.1 193.2L451.4 194.0L451.6 195.0L451.8 196.2L452.1 197.7L452.3 199.5L452.6 202.0L452.8 205.8L453.0 213.5L453.1 218.0L453.1 222.0L453.2 230.8L453.2 229.1L453.2 221.4L453.3 215.3L453.5 206.6L453.8 202.8L454.0 200.4L454.2 198.7L454.5 197.4L454.7 196.4L455.0 195.6L455.2 194.9L455.4 194.4L455.7 194.0L455.9 193.7L456.2 193.5L456.4 193.3L456.6 193.3L456.8 193.2L456.9 193.3L457.1 193.3L457.4 193.5L457.6 193.7L457.8 194.0L458.1 194.3L458.3 194.8L458.6 195.3L458.8 195.9L459.0 196.7L459.3 197.6L459.5 198.7L459.8 200.0L460.0 201.6L460.2 203.7L460.5 206.7L460.7 211.7L460.9 224.7L461.0 232.8L461.0 233.1L461.0 224.8L461.1 221.0L461.2 212.8L461.4 207.5L461.7 204.5L461.9 202.5L462.2 201.0L462.4 199.9L462.7 198.9L462.9 198.2L463.1 197.6L463.4 197.1L463.6 196.7L463.9 196.5L464.1 196.3L464.3 196.1L464.6 196.1L464.6 196.1L464.8 196.1L465.1 196.2L465.3 196.4L465.5 196.6L465.8 196.9L466.0 197.3L466.3 197.8L466.5 198.4L466.7 199.1L467.0 199.9L467.2 200.8L467.5 202.0L467.7 203.4L467.9 205.3L468.2 207.7L468.4 211.4L468.7 219.0L468.7 227.0L468.8 234.6L468.8 236.8L468.8 227.8L468.9 223.8L468.9 221.3L469.1 212.4L469.4 208.5L469.6 206.1L469.9 204.4L470.1 203.0L470.3 202.0L470.6 201.1L470.8 200.5L471.1 199.9L471.3 199.5L471.5 199.2L471.8 198.9L472.0 198.7L472.3 198.7L472.4 198.6L472.5 198.6L472.7 198.7L473.0 198.8L473.2 199.0L473.5 199.3L473.7 199.6L473.9 200.0L474.2 200.5L474.4 201.2L474.7 201.9L474.9 202.8L475.1 203.8L475.4 205.1L475.6 206.7L475.9 208.8L476.1 211.7L476.3 216.7L476.6 229.1L476.6 236.2L476.6 240.4L476.6 230.5L476.7 226.4L476.8 218.0L477.1 212.6L477.3 209.6L477.5 207.5L477.8 206.0L478.0 204.8L478.3 203.9L478.5 203.1L478.7 202.5L479.0 202.0L479.2 201.6L479.5 201.3L479.7 201.1L479.9 201.0L480.2 200.9L480.3 200.9L480.4 200.9L480.7 201.0L480.9 201.2L481.2 201.4L481.4 201.7L481.6 202.0L481.9 202.5L482.1 203.1L482.4 203.7L482.6 204.5L482.8 205.5L483.1 206.6L483.3 208.0L483.6 209.8L483.8 212.3L484.0 215.9L484.3 223.4L484.4 231.0L484.4 237.7L484.4 243.9L484.5 233.0L484.5 228.8L484.5 226.1L484.8 217.0L485.0 213.1L485.2 210.6L485.5 208.9L485.7 207.5L486.0 206.5L486.2 205.6L486.4 204.9L486.7 204.4L486.9 203.9L487.2 203.6L487.4 203.3L487.6 203.1L487.9 203.0L488.1 203.0L488.4 203.0L488.6 203.1L488.8 203.3L489.1 203.6L489.3 203.9L489.6 204.3L489.8 204.8L490.0 205.4L490.3 206.1L490.5 207.0L490.8 208.0L491.0 209.3L491.2 210.9L491.5 212.9L491.7 215.8L492.0 220.7L492.2 232.7L492.2 239.0L492.2 247.7L492.3 235.4L492.3 231.0L492.4 222.3L492.7 216.8L492.9 213.7L493.2 211.7L493.4 210.1L493.6 208.9L493.9 208.0L494.1 207.2L494.4 206.6L494.6 206.1L494.8 205.7L495.1 205.4L495.3 205.1L495.6 205.0L495.8 204.9L495.9 204.9L496.0 204.9L496.3 205.0L496.5 205.1L496.8 205.3L497.0 205.6L497.2 206.0L497.5 206.4L497.7 207.0L498.0 207.6L498.2 208.4L498.4 209.3L498.7 210.5L498.9 211.9L499.2 213.7L499.4 216.1L499.7 219.7L499.9 227.0L500.0 234.3L500.0 240.2L500.0 251.8L500.1 237.6L500.1 233.0L500.1 230.2L500.4 220.9L500.6 216.9L500.9 214.5L501.1 212.7L501.3 211.3L501.6 210.2L501.8 209.4L502.1 208.7L502.3 208.1L502.5 207.6L502.8 207.3L503.0 207.0L503.3 206.8L503.5 206.7L503.7 206.7L503.8 206.7L504.0 206.7L504.2 206.8L504.5 207.0L504.7 207.2L504.9 207.5L505.2 207.9L505.4 208.4L505.7 209.0L505.9 209.7L506.1 210.6L506.4 211.6L506.6 212.8L506.9 214.4L507.1 216.5L507.3 219.3L507.6 224.1L507.8 235.7L507.8 241.4L507.8 256.9L507.9 239.7L507.9 234.9L508.1 225.9L508.3 220.4L508.5 217.3L508.8 215.2L509.0 213.6L509.3 212.4L509.5 211.5L509.7 210.7L510.0 210.0L510.2 209.5L510.5 209.1L510.7 208.8L510.9 208.6L511.2 208.4L511.4 208.3L511.6 208.3L511.7 208.3L511.9 208.4L512.1 208.5L512.4 208.7L512.6 209.0L512.9 209.3L513.1 209.8L513.3 210.3L513.6 211.0L513.8 211.7L514.1 212.7L514.3 213.8L514.5 215.2L514.8 216.9L515.0 219.3L515.3 222.9L515.5 230.1L515.6 237.1L515.6 242.5L515.7 264.9L515.7 241.8L515.7 236.8L515.7 233.8L516.0 224.3L516.2 220.3L516.5 217.8L516.7 216.0L516.9 214.6L517.2 213.5L517.4 212.6L517.7 211.9L517.9 211.4L518.2 210.9L518.4 210.5L518.6 210.2L518.9 210.0L519.1 209.9L519.4 209.9L519.4 209.9L519.6 209.9L519.8 210.0L520.1 210.1L520.3 210.4L520.6 210.7L520.8 211.1L521.0 211.6L521.3 212.2L521.5 212.9L521.8 213.7L522.0 214.7L522.2 216.0L522.5 217.5L522.7 219.5L523.0 222.4L523.2 227.2L523.4 238.4L523.4 243.5L523.5 274.6L523.5 243.7L523.5 238.5L523.7 229.2L523.9 223.5L524.2 220.4L524.4 218.3L524.6 216.8L524.9 215.5L525.1 214.6L525.4 213.8L525.6 213.1L525.8 212.6L526.1 212.2L526.3 211.9L526.6 211.6L526.8 211.5L527.0 211.4L527.2 211.4L527.3 211.4L527.5 211.4L527.8 211.5L528.0 211.7L528.2 212.0L528.5 212.3L528.7 212.8L529.0 213.3L529.2 213.9L529.4 214.7L529.7 215.6L529.9 216.7L530.2 218.1L530.4 219.9L530.6 222.3L530.9 225.8L531.1 232.9L531.2 239.6L531.2 244.5L531.3 264.0L531.3 245.7L531.3 240.2L531.4 237.1L531.6 227.3L531.8 223.3L532.1 220.7L532.3 218.9L532.6 217.6L532.8 216.5L533.0 215.6L533.3 214.9L533.5 214.3L533.8 213.8L534.0 213.4L534.2 213.2L534.5 212.9L534.7 212.8L535.0 212.8L535.0 212.8L535.2 212.8L535.5 212.9L535.7 213.0L535.9 213.3L536.2 213.6L536.4 213.9L536.7 214.4L536.9 215.0L537.1 215.7L537.4 216.5L537.6 217.5L537.9 218.8L538.1 220.3L538.3 222.3L538.6 225.2L538.8 229.9L539.0 240.7L539.1 245.4L539.1 261.0L539.1 247.6L539.1 241.8L539.3 232.1L539.5 226.4L539.8 223.3L540.0 221.2L540.3 219.6L540.5 218.4L540.7 217.4L541.0 216.6L541.2 215.9L541.5 215.4L541.7 215.0L541.9 214.7L542.2 214.4L542.4 214.2L542.7 214.1L542.8 214.1L542.9 214.1L543.1 214.2L543.4 214.3L543.6 214.5L543.9 214.7L544.1 215.1L544.3 215.5L544.6 216.0L544.8 216.7L545.1 217.4L545.3 218.4L545.5 219.5L545.8 220.8L546.0 222.6L546.3 225.0L546.5 228.5L546.7 235.4L546.8 241.9L546.9 246.4L546.9 259.6L546.9 249.5L547.0 243.4L547.0 240.1L547.2 230.1L547.5 226.0L547.7 223.5L547.9 221.7L548.2 220.3L548.4 219.2L548.7 218.3L548.9 217.6L549.1 217.0L549.4 216.5L549.6 216.1L549.9 215.8L550.1 215.6L550.3 215.5L550.6 215.5L550.7 215.5L550.8 215.5L551.1 215.5L551.3 215.7L551.5 215.9L551.8 216.2L552.0 216.6L552.3 217.1L552.5 217.7L552.7 218.4L553.0 219.2L553.2 220.2L553.5 221.4L553.7 223.0L554.0 225.0L554.2 227.8L554.4 232.4L554.6 243.0L554.7 247.3L554.7 258.9L554.7 251.5L554.8 245.0L554.9 234.9L555.2 229.1L555.4 226.0L555.6 223.8L555.9 222.3L556.1 221.0L556.4 220.0L556.6 219.2L556.8 218.6L557.1 218.0L557.3 217.6L557.6 217.3L557.8 217.0L558.0 216.9L558.3 216.8L558.5 216.8L558.5 216.8L558.8 216.8L559.0 216.9L559.2 217.1L559.5 217.4L559.7 217.7L560.0 218.1L560.2 218.7L560.4 219.3L560.7 220.0L560.9 221.0L561.2 222.1L561.4 223.4L561.6 225.2L561.9 227.5L562.1 231.0L562.4 237.9L562.4 244.1L562.5 248.2L562.5 258.6L562.5 253.4L562.6 246.6L562.6 243.1L562.8 232.8L563.1 228.7L563.3 226.1L563.6 224.3L563.8 222.9L564.0 221.8L564.3 220.9L564.5 220.2L564.8 219.6L565.0 219.1L565.2 218.7L565.5 218.4L565.7 218.2L566.0 218.1L566.2 218.0L566.3 218.0L566.4 218.1L566.7 218.1L566.9 218.3L567.2 218.5L567.4 218.8L567.6 219.2L567.9 219.7L568.1 220.2L568.4 220.9L568.6 221.8L568.8 222.8L569.1 224.0L569.3 225.5L569.6 227.5L569.8 230.3L570.0 234.9L570.3 245.2L570.3 249.2L570.3 258.6L570.3 255.5L570.4 248.2L570.5 237.6L570.8 231.8L571.0 228.6L571.2 226.5L571.5 224.9L571.7 223.6L572.0 222.6L572.2 221.8L572.5 221.2L572.7 220.6L572.9 220.2L573.2 219.9L573.4 219.6L573.7 219.5L573.9 219.4L574.1 219.3L574.1 219.3L574.4 219.4L574.6 219.5L574.9 219.7L575.1 220.0L575.3 220.3L575.6 220.7L575.8 221.2L576.1 221.9L576.3 222.6L576.5 223.5L576.8 224.6L577.0 226.0L577.3 227.7L577.5 230.1L577.7 233.5L578.0 240.3L578.1 246.3L578.1 250.2L578.1 258.8L578.2 257.6L578.2 249.8L578.2 246.1L578.5 235.5L578.7 231.4L578.9 228.8L579.2 226.9L579.4 225.5L579.7 224.4L579.9 223.5L580.1 222.8L580.4 222.2L580.6 221.7L580.9 221.4L581.1 221.1L581.3 220.9L581.6 220.7L581.8 220.7L581.9 220.7L582.1 220.7L582.3 220.8L582.5 220.9L582.8 221.1L583.0 221.4L583.3 221.8L583.5 222.3L583.7 222.9L584.0 223.6L584.2 224.4L584.5 225.4L584.7 226.6L584.9 228.2L585.2 230.1L585.4 232.9L585.7 237.5L585.9 251.2L585.9 259.2L586.0 259.9L586.0 251.5L586.0 247.6L586.1 240.5L586.4 234.5L586.6 231.3L586.9 229.2L587.1 227.6L587.3 226.3L587.6 225.3L587.8 224.5L588.1 223.9L588.3 223.4L588.5 222.9L588.8 222.6L589.0 222.3L589.3 222.2L589.5 222.1L589.7 222.1L589.7 222.1L590.0 222.1L590.2 222.2L590.5 222.4L590.7 222.7L591.0 223.0L591.2 223.5L591.4 224.0L591.7 224.6L591.9 225.4L592.2 226.3L592.4 227.4L592.6 228.7L592.9 230.5L593.1 232.8L593.4 236.3L593.6 242.9L593.7 252.3L593.7 259.8L593.8 262.4L593.8 253.2L593.8 249.2L594.1 238.4L594.3 234.2L594.6 231.6L594.8 229.8L595.0 228.4L595.3 227.3L595.5 226.4L595.8 225.7L596.0 225.1L596.2 224.6L596.5 224.2L596.7 223.9L597.0 223.7L597.2 223.6L597.4 223.6L597.5 223.5L597.7 223.6L597.9 223.7L598.2 223.8L598.4 224.0L598.6 224.3L598.9 224.7L599.1 225.2L599.4 225.8L599.6 226.5L599.8 227.3L600.1 228.3L600.3 229.6L600.6 231.1L600.8 233.1L601.0 235.9L601.3 240.4L601.5 253.6L601.6 260.6L601.6 265.2L601.6 255.1L601.6 251.0L601.8 243.6L602.0 237.6L602.2 234.4L602.5 232.2L602.7 230.6L603.0 229.4L603.2 228.4L603.4 227.6L603.7 227.0L603.9 226.4L604.2 226.0L604.4 225.7L604.6 225.4L604.9 225.3L605.1 225.2L605.3 225.2L605.4 225.2L605.6 225.2L605.8 225.4L606.1 225.6L606.3 225.8L606.6 226.2L606.8 226.6L607.0 227.2L607.3 227.8L607.5 228.6L607.8 229.5L608.0 230.6L608.2 232.0L608.5 233.7L608.7 236.0L609.0 239.5L609.2 246.0L609.3 255.1L609.4 261.6L609.4 268.5L609.4 257.2L609.5 252.9L609.7 241.8L609.9 237.6L610.2 235.0L610.4 233.2L610.7 231.8L610.9 230.7L611.1 229.8L611.4 229.1L611.6 228.5L611.9 228.0L612.1 227.7L612.3 227.4L612.6 227.2L612.8 227.1L613.1 227.1L613.1 227.1L613.3 227.1L613.5 227.2L613.8 227.4L614.0 227.6L614.3 227.9L614.5 228.3L614.7 228.8L615.0 229.4L615.2 230.1L615.5 231.0L615.7 232.0L615.9 233.3L616.2 234.8L616.4 236.8L616.7 239.6L616.9 244.1L617.1 256.9L617.2 263.1L617.2 272.4L617.2 259.7L617.3 255.2L617.4 247.6L617.6 241.5L617.9 238.3L618.1 236.2L618.3 234.6L618.6 233.4L618.8 232.4L619.1 231.6L619.3 231.0L619.5 230.5L619.8 230.1L620.0 229.8L620.3 229.6L620.5 229.4L620.7 229.4L620.8 229.4L621.0 229.4L621.2 229.5L621.5 229.6L621.7 229.9L621.9 230.2L622.2 230.5L622.4 231.0L622.7 231.6L622.9 232.2L623.1 233.0L623.4 234.0L623.6 235.1L623.9 236.5L624.1 238.3L624.3 240.6L624.6 244.1L624.8 250.6L624.9 259.3L625.0 265.1L625.0 277.6L625.0 262.8L625.1 258.1L625.3 246.7L625.5 242.5L625.8 239.9L626.0 238.1L626.3 236.7L626.5 235.7L626.8 234.8L627.0 234.2L627.2 233.6L627.5 233.2L627.7 232.9L628.0 232.7L628.2 232.6L628.4 232.5L628.5 232.5L628.7 232.5L628.9 232.6L629.2 232.7L629.4 233.0L629.6 233.3L629.9 233.6L630.1 234.1L630.4 234.7L630.6 235.3L630.8 236.1L631.1 237.0L631.3 238.1L631.6 239.4L631.8 241.0L632.0 243.1L632.3 245.9L632.5 250.5L632.8 262.9L632.8 268.5L632.8 285.3L632.8 267.1L632.9 262.3L633.0 254.4L633.2 248.3L633.5 245.2L633.7 243.1L634.0 241.6L634.2 240.5L634.4 239.6L634.7 238.9L634.9 238.4L635.2 238.0L635.4 237.8L635.6 237.6L635.9 237.5L636.0 237.5L636.1 237.5L636.4 237.6L636.6 237.7L636.8 238.0L637.1 238.3L637.3 238.7L637.6 239.1L637.8 239.7L638.0 240.3L638.3 241.1L638.5 242.0L638.8 243.0L639.0 244.2L639.2 245.5L639.5 247.2L639.7 249.2L640.0 251.9L640.2 255.6L640.4 262.3L640.6 270.8L640.6 276.2L640.6 301.8L640.7 275.8L640.7 270.8L640.9 259.4L641.2 255.6L641.4 253.5L641.6 252.2L641.9 251.3L642.1 250.9L642.4 250.7L642.4 250.7L642.6 250.8L642.8 251.2L643.1 251.8L643.3 252.7L643.6 254.1L643.8 256.0L644.0 258.8L644.3 263.9L644.5 279.4" stroke="#EDB120" stroke-width="1.3"/><path d="M398.5 146.0L398.7 146.0L399.0 146.0L399.2 146.0L399.5 146.0L399.7 146.0L399.9 146.0L400.2 146.0L400.4 146.0L400.7 146.0L400.9 146.0L401.1 146.0L401.4 146.0L401.6 146.0L401.9 146.0L402.1 146.0L402.3 146.0L402.6 146.0L402.8 146.0L403.1 146.0L403.3 146.0L403.5 146.0L403.8 146.1L404.0 146.1L404.3 146.1L404.5 146.1L404.7 146.1L405.0 146.1L405.2 146.2L405.5 146.2L405.7 146.2L405.9 146.2L406.2 146.3L406.4 146.3L406.7 146.3L406.9 146.4L407.1 146.4L407.4 146.4L407.6 146.5L407.9 146.5L408.1 146.6L408.4 146.6L408.6 146.7L408.8 146.8L409.1 146.8L409.3 146.9L409.6 147.0L409.8 147.1L410.0 147.2L410.3 147.2L410.5 147.3L410.8 147.4L411.0 147.5L411.2 147.6L411.5 147.8L411.7 147.9L412.0 148.0L412.2 148.1L412.4 148.2L412.7 148.4L412.9 148.5L413.2 148.7L413.4 148.8L413.6 149.0L413.9 149.1L414.1 149.3L414.4 149.5L414.6 149.7L414.8 149.8L415.1 150.0L415.3 150.2L415.6 150.4L415.8 150.6L416.0 150.9L416.3 151.1L416.5 151.3L416.8 151.5L417.0 151.8L417.2 152.0L417.5 152.3L417.7 152.5L418.0 152.8L418.2 153.1L418.4 153.4L418.7 153.6L418.9 153.9L419.2 154.2L419.4 154.6L419.6 154.9L419.9 155.2L420.1 155.5L420.4 155.9L420.6 156.2L420.8 156.6L421.1 156.9L421.3 157.3L421.6 157.7L421.8 158.1L422.0 158.5L422.3 158.9L422.5 159.3L422.8 159.7L423.0 160.1L423.2 160.6L423.5 161.0L423.7 161.5L424.0 161.9L424.2 162.4L424.4 162.9L424.7 163.4L424.9 163.9L425.2 164.5L425.4 165.0L425.6 165.5L425.9 166.1L426.1 166.7L426.4 167.2L426.6 167.8L426.9 168.4L427.1 169.0L427.3 169.7L427.6 170.3L427.8 171.0L428.1 171.7L428.3 172.4L428.5 173.1L428.8 173.8L429.0 174.5L429.3 175.3L429.5 176.0L429.7 176.8L430.0 177.7L430.2 178.5L430.5 179.3L430.7 180.2L430.9 181.1L431.2 182.0L431.4 183.0L431.7 183.9L431.9 184.9L432.1 186.0L432.4 187.0L432.6 188.1L432.9 189.3L433.1 190.4L433.3 191.6L433.6 192.9L433.8 194.2L434.1 195.5L434.3 196.9L434.5 198.3L434.8 199.8L435.0 201.4L435.3 203.0L435.5 204.7L435.7 206.6L436.0 208.4L436.2 210.5L436.5 212.6L436.7 214.8L436.9 217.1L437.2 219.6L437.4 222.2L437.7 224.8L437.9 227.3L438.1 229.5L438.4 231.3L438.6 232.3L438.9 232.8L438.9 232.8L438.9 232.8L439.0 232.8L439.0 232.8L439.0 232.8L439.1 232.8L439.3 232.5L439.6 232.3L439.8 232.2L439.9 232.2L440.1 232.3L440.3 232.7L440.5 233.5L440.8 234.9L441.0 237.2L441.3 241.6L441.5 253.6L441.5 260.6L441.5 264.8L441.6 254.9L441.6 250.7L441.7 242.0L442.0 236.2L442.2 232.9L442.5 230.6L442.7 228.8L442.9 227.4L443.2 226.3L443.4 225.5L443.7 224.8L443.9 224.2L444.2 223.8L444.4 223.5L444.6 223.4L444.9 223.3L445.1 223.4L445.4 223.5L445.6 223.9L445.8 224.3L446.1 224.9L446.3 225.7L446.6 226.6L446.8 227.9L447.0 229.6L447.3 232.0L447.5 235.6L447.8 243.4L447.8 248.2L447.8 252.6L447.9 264.7L447.9 256.3L447.9 250.0L448.0 244.3L448.2 235.8L448.5 232.0L448.7 229.5L449.0 227.7L449.2 226.3L449.4 225.2L449.7 224.3L449.9 223.6L450.2 223.0L450.4 222.6L450.6 222.2L450.9 221.9L451.1 221.8L451.4 221.7L451.5 221.6L451.6 221.6L451.8 221.7L452.1 221.8L452.3 222.1L452.6 222.4L452.8 222.7L453.0 223.2L453.3 223.8L453.5 224.6L453.8 225.5L454.0 226.6L454.2 227.9L454.5 229.6L454.7 232.0L455.0 235.5L455.2 242.4L455.3 248.8L455.3 253.3L455.4 266.4L455.4 256.6L455.4 250.4L455.4 247.1L455.7 237.1L455.9 233.0L456.2 230.4L456.4 228.6L456.6 227.2L456.9 226.1L457.1 225.2L457.4 224.4L457.6 223.8L457.8 223.3L458.1 222.9L458.3 222.6L458.6 222.3L458.8 222.2L459.0 222.1L459.3 222.0L459.3 222.0L459.5 222.0L459.8 222.1L460.0 222.3L460.2 222.5L460.5 222.8L460.7 223.1L461.0 223.5L461.2 224.0L461.4 224.7L461.7 225.4L461.9 226.2L462.2 227.3L462.4 228.5L462.7 230.1L462.9 232.1L463.1 235.0L463.4 239.8L463.6 251.1L463.6 256.4L463.6 281.9L463.7 256.0L463.7 250.9L463.9 241.7L464.1 236.0L464.3 232.9L464.6 230.8L464.8 229.2L465.1 228.0L465.3 226.9L465.5 226.1L465.8 225.4L466.0 224.8L466.3 224.4L466.5 224.0L466.7 223.7L467.0 223.4L467.2 223.2L467.5 223.1L467.7 223.1L467.8 223.1L467.9 223.1L468.2 223.1L468.4 223.3L468.7 223.4L468.9 223.7L469.1 224.0L469.4 224.4L469.6 224.8L469.9 225.4L470.1 226.0L470.3 226.8L470.6 227.7L470.8 228.8L471.1 230.2L471.3 231.9L471.5 234.2L471.8 237.7L472.0 244.5L472.1 250.5L472.1 254.6L472.2 264.1L472.2 260.8L472.2 253.5L472.3 249.9L472.5 239.4L472.7 235.3L473.0 232.7L473.2 230.8L473.5 229.4L473.7 228.2L473.9 227.2L474.2 226.4L474.4 225.8L474.7 225.2L474.9 224.8L475.1 224.4L475.4 224.1L475.6 223.9L475.9 223.7L476.1 223.6L476.3 223.5L476.4 223.5L476.6 223.6L476.8 223.6L477.1 223.8L477.3 224.0L477.5 224.2L477.8 224.6L478.0 225.0L478.3 225.5L478.5 226.1L478.7 226.8L479.0 227.7L479.2 228.7L479.5 230.0L479.7 231.7L479.9 233.9L480.2 237.1L480.4 243.0L480.6 253.9L480.6 261.8L480.6 262.7L480.7 254.1L480.7 250.3L480.9 240.2L481.2 235.7L481.4 232.9L481.6 231.0L481.9 229.5L482.1 228.2L482.4 227.3L482.6 226.4L482.8 225.8L483.1 225.2L483.3 224.7L483.6 224.3L483.8 224.0L484.0 223.8L484.3 223.6L484.5 223.5L484.8 223.5L484.8 223.5L485.0 223.5L485.2 223.6L485.5 223.7L485.7 224.0L486.0 224.3L486.2 224.6L486.4 225.1L486.7 225.7L486.9 226.3L487.2 227.1L487.4 228.1L487.6 229.3L487.9 230.9L488.1 232.9L488.4 235.8L488.6 240.7L488.8 253.4L488.8 261.0L488.9 262.8L488.9 254.0L488.9 250.0L489.1 241.7L489.3 236.3L489.6 233.2L489.8 231.1L490.0 229.5L490.3 228.2L490.5 227.2L490.8 226.3L491.0 225.6L491.2 225.0L491.5 224.5L491.7 224.1L492.0 223.8L492.2 223.6L492.4 223.4L492.7 223.3L492.9 223.3L493.2 223.3L493.4 223.4L493.6 223.6L493.9 223.8L494.1 224.1L494.4 224.5L494.6 225.0L494.8 225.6L495.1 226.3L495.3 227.2L495.6 228.3L495.8 229.6L496.0 231.4L496.3 233.7L496.5 237.2L496.8 244.3L496.9 251.1L496.9 256.2L496.9 288.0L496.9 256.5L497.0 251.2L497.0 248.2L497.2 238.5L497.5 234.4L497.7 231.8L498.0 230.0L498.2 228.5L498.4 227.4L498.7 226.5L498.9 225.7L499.2 225.0L499.4 224.5L499.7 224.1L499.9 223.7L500.1 223.5L500.4 223.3L500.6 223.2L500.9 223.1L500.9 223.1L501.1 223.1L501.3 223.2L501.6 223.3L501.8 223.6L502.1 223.9L502.3 224.3L502.5 224.7L502.8 225.3L503.0 226.0L503.3 226.9L503.5 227.9L503.7 229.2L504.0 230.9L504.2 233.2L504.5 236.5L504.7 242.9L504.8 251.4L504.8 257.2L504.9 271.3L504.9 255.2L504.9 250.5L505.2 238.8L505.4 234.5L505.7 231.8L505.9 229.9L506.1 228.5L506.4 227.3L506.6 226.3L506.9 225.6L507.1 224.9L507.3 224.4L507.6 223.9L507.8 223.6L508.1 223.3L508.3 223.1L508.5 223.0L508.8 223.0L508.8 223.0L509.0 223.0L509.3 223.1L509.5 223.2L509.7 223.5L510.0 223.8L510.2 224.2L510.5 224.7L510.7 225.3L510.9 226.0L511.2 226.9L511.4 228.0L511.7 229.4L511.9 231.1L512.1 233.5L512.4 237.2L512.6 244.8L512.7 249.3L512.7 253.2L512.7 262.1L512.8 260.3L512.8 252.6L512.9 246.5L513.1 237.7L513.3 233.8L513.6 231.3L513.8 229.5L514.1 228.1L514.3 227.0L514.5 226.1L514.8 225.3L515.0 224.7L515.3 224.2L515.5 223.8L515.7 223.4L516.0 223.2L516.2 223.0L516.5 222.9L516.7 222.9L516.7 222.9L516.9 222.9L517.2 223.1L517.4 223.2L517.7 223.5L517.9 223.8L518.2 224.3L518.4 224.8L518.6 225.5L518.9 226.2L519.1 227.2L519.4 228.4L519.6 229.9L519.8 231.8L520.1 234.6L520.3 239.1L520.6 252.8L520.6 260.8L520.6 261.3L520.6 253.0L520.7 249.1L520.8 241.9L521.0 236.0L521.3 232.7L521.5 230.5L521.8 228.9L522.0 227.6L522.2 226.6L522.5 225.7L522.7 225.0L523.0 224.4L523.2 224.0L523.4 223.6L523.7 223.3L523.9 223.1L524.2 223.0L524.4 222.9L524.5 222.9L524.6 222.9L524.9 223.0L525.1 223.1L525.4 223.3L525.6 223.6L525.8 224.0L526.1 224.5L526.3 225.1L526.6 225.8L526.8 226.7L527.0 227.7L527.3 229.0L527.5 230.7L527.8 233.0L528.0 236.4L528.2 243.0L528.4 252.4L528.4 259.9L528.4 262.4L528.5 253.3L528.5 249.3L528.7 238.4L529.0 234.2L529.2 231.5L529.4 229.7L529.7 228.2L529.9 227.1L530.2 226.1L530.4 225.4L530.6 224.7L530.9 224.2L531.1 223.8L531.4 223.5L531.6 223.2L531.8 223.0L532.1 222.9L532.3 222.9L532.3 222.9L532.6 222.9L532.8 223.1L533.0 223.2L533.3 223.5L533.5 223.9L533.8 224.3L534.0 224.8L534.2 225.5L534.5 226.3L534.7 227.3L535.0 228.5L535.2 230.0L535.5 232.0L535.7 234.8L535.9 239.5L536.1 251.0L536.2 256.4L536.2 275.9L536.2 255.4L536.3 250.4L536.4 241.3L536.7 235.7L536.9 232.5L537.1 230.4L537.4 228.8L537.6 227.5L537.9 226.5L538.1 225.7L538.3 225.0L538.6 224.4L538.8 224.0L539.1 223.6L539.3 223.3L539.5 223.1L539.8 223.0L540.0 222.9L540.1 222.9L540.3 223.0L540.5 223.0L540.7 223.2L541.0 223.4L541.2 223.8L541.5 224.2L541.7 224.7L541.9 225.3L542.2 226.0L542.4 226.9L542.7 228.0L542.9 229.4L543.1 231.2L543.4 233.7L543.6 237.5L543.9 246.0L543.9 251.7L543.9 257.9L544.0 266.7L544.0 254.3L544.0 249.9L544.1 245.1L544.3 237.2L544.6 233.5L544.8 231.1L545.1 229.3L545.3 228.0L545.5 226.9L545.8 226.0L546.0 225.3L546.3 224.7L546.5 224.2L546.7 223.8L547.0 223.5L547.2 223.2L547.5 223.1L547.7 223.0L547.9 223.0L547.9 223.0L548.2 223.1L548.4 223.2L548.7 223.4L548.9 223.7L549.1 224.1L549.4 224.5L549.6 225.1L549.9 225.8L550.1 226.7L550.3 227.7L550.6 229.0L550.8 230.7L551.1 232.9L551.3 236.2L551.5 242.3L551.7 250.0L551.7 254.5L551.7 267.6L551.8 257.7L551.8 251.6L552.0 238.9L552.3 234.5L552.5 231.8L552.7 229.9L553.0 228.4L553.2 227.2L553.5 226.3L553.7 225.5L554.0 224.9L554.2 224.4L554.4 223.9L554.7 223.6L554.9 223.4L555.2 223.2L555.4 223.1L555.6 223.1L555.6 223.1L555.9 223.1L556.1 223.2L556.4 223.4L556.6 223.7L556.8 224.0L557.1 224.5L557.3 225.0L557.6 225.7L557.8 226.5L558.0 227.5L558.3 228.7L558.5 230.2L558.8 232.3L559.0 235.2L559.2 240.2L559.4 249.6L559.4 253.7L559.5 263.5L559.5 259.4L559.5 252.4L559.7 240.9L560.0 235.5L560.2 232.5L560.4 230.4L560.7 228.8L560.9 227.6L561.2 226.6L561.4 225.8L561.6 225.1L561.9 224.6L562.1 224.1L562.4 223.8L562.6 223.5L562.8 223.3L563.1 223.2L563.3 223.1L563.4 223.1L563.6 223.2L563.8 223.2L564.0 223.4L564.3 223.7L564.5 224.0L564.8 224.4L565.0 224.9L565.2 225.6L565.5 226.3L565.7 227.3L566.0 228.4L566.2 229.9L566.4 231.8L566.7 234.4L566.9 238.7L567.2 249.9L567.2 254.2L567.2 265.2L567.3 258.7L567.3 252.1L567.4 243.1L567.6 236.6L567.9 233.2L568.1 230.9L568.4 229.2L568.6 227.9L568.8 226.9L569.1 226.0L569.3 225.3L569.6 224.7L569.8 224.3L570.0 223.9L570.3 223.6L570.5 223.4L570.8 223.3L571.0 223.2L571.1 223.2L571.2 223.2L571.5 223.3L571.7 223.4L572.0 223.7L572.2 224.0L572.5 224.4L572.7 224.9L572.9 225.5L573.2 226.2L573.4 227.1L573.7 228.2L573.9 229.6L574.1 231.4L574.4 233.8L574.6 237.6L574.9 245.7L574.9 250.8L574.9 255.8L575.0 279.6L575.0 256.5L575.0 251.1L575.1 245.9L575.3 237.6L575.6 233.9L575.8 231.4L576.1 229.6L576.3 228.3L576.5 227.2L576.8 226.3L577.0 225.5L577.3 224.9L577.5 224.4L577.7 224.0L578.0 223.7L578.2 223.5L578.5 223.3L578.7 223.3L578.8 223.3L578.9 223.3L579.2 223.3L579.4 223.5L579.7 223.7L579.9 224.0L580.1 224.4L580.4 224.8L580.6 225.4L580.9 226.1L581.1 227.0L581.3 228.0L581.6 229.4L581.8 231.0L582.1 233.3L582.3 236.7L582.5 243.3L582.7 252.5L582.7 259.4L582.7 264.1L582.8 254.0L582.8 249.8L583.0 238.8L583.3 234.5L583.5 231.9L583.7 230.0L584.0 228.6L584.2 227.4L584.5 226.5L584.7 225.7L584.9 225.1L585.2 224.6L585.4 224.2L585.7 223.8L585.9 223.6L586.1 223.4L586.4 223.3L586.6 223.3L586.6 223.3L586.9 223.4L587.1 223.5L587.3 223.7L587.6 224.0L587.8 224.3L588.1 224.8L588.3 225.4L588.5 226.0L588.8 226.9L589.0 227.9L589.3 229.1L589.5 230.7L589.7 232.9L590.0 236.0L590.2 241.6L590.4 250.5L590.4 255.2L590.4 270.5L590.5 257.5L590.5 251.7L590.7 240.0L591.0 235.2L591.2 232.4L591.4 230.4L591.7 228.9L591.9 227.7L592.2 226.7L592.4 225.9L592.6 225.3L592.9 224.7L593.1 224.3L593.4 224.0L593.6 223.7L593.8 223.5L594.1 223.4L594.3 223.4L594.6 223.4L594.8 223.5L595.0 223.7L595.3 224.0L595.5 224.3L595.8 224.8L596.0 225.3L596.2 226.0L596.5 226.8L596.7 227.7L597.0 229.0L597.2 230.5L597.4 232.5L597.7 235.4L597.9 240.3L598.1 253.0L598.2 260.7L598.2 262.4L598.2 253.6L598.2 249.6L598.4 241.3L598.6 235.9L598.9 232.9L599.1 230.7L599.4 229.2L599.6 227.9L599.8 226.9L600.1 226.1L600.3 225.4L600.6 224.9L600.8 224.4L601.0 224.1L601.3 223.8L601.5 223.6L601.8 223.5L602.0 223.4L602.0 223.4L602.2 223.5L602.5 223.6L602.7 223.7L603.0 224.0L603.2 224.3L603.4 224.7L603.7 225.2L603.9 225.9L604.2 226.7L604.4 227.6L604.6 228.8L604.9 230.3L605.1 232.2L605.4 234.9L605.6 239.3L605.8 251.6L605.9 257.2L605.9 273.1L605.9 255.6L606.0 250.8L606.1 242.9L606.3 236.6L606.6 233.3L606.8 231.1L607.0 229.4L607.3 228.1L607.5 227.1L607.8 226.3L608.0 225.6L608.2 225.0L608.5 224.5L608.7 224.2L609.0 223.9L609.2 223.7L609.5 223.5L609.7 223.5L609.8 223.5L609.9 223.5L610.2 223.6L610.4 223.7L610.7 224.0L610.9 224.3L611.1 224.7L611.4 225.2L611.6 225.8L611.9 226.6L612.1 227.5L612.3 228.6L612.6 230.0L612.8 231.9L613.1 234.4L613.3 238.4L613.5 247.8L613.6 250.6L613.6 255.2L613.6 269.4L613.7 257.8L613.7 251.9L613.8 244.6L614.0 237.4L614.3 233.8L614.5 231.4L614.7 229.7L615.0 228.4L615.2 227.3L615.5 226.4L615.7 225.7L615.9 225.1L616.2 224.6L616.4 224.2L616.7 223.9L616.9 223.7L617.1 223.6L617.4 223.5L617.5 223.5L617.6 223.5L617.9 223.6L618.1 223.7L618.3 224.0L618.6 224.3L618.8 224.7L619.1 225.1L619.3 225.7L619.5 226.5L619.8 227.4L620.0 228.5L620.3 229.8L620.5 231.6L620.7 234.0L621.0 237.6L621.2 245.3L621.3 249.8L621.3 253.8L621.3 263.0L621.4 260.5L621.4 253.0L621.5 246.9L621.7 238.2L621.9 234.3L622.2 231.8L622.4 230.0L622.7 228.6L622.9 227.5L623.1 226.6L623.4 225.8L623.6 225.2L623.9 224.7L624.1 224.3L624.3 224.0L624.6 223.8L624.8 223.6L625.1 223.5L625.2 223.5L625.3 223.5L625.5 223.6L625.8 223.7L626.0 223.9L626.3 224.2L626.5 224.6L626.8 225.1L627.0 225.7L627.2 226.4L627.5 227.2L627.7 228.3L628.0 229.6L628.2 231.3L628.4 233.6L628.7 237.0L628.9 243.5L629.0 252.8L629.1 259.9L629.1 263.8L629.1 254.1L629.2 250.0L629.4 239.0L629.6 234.8L629.9 232.1L630.1 230.2L630.4 228.8L630.6 227.7L630.8 226.7L631.1 226.0L631.3 225.3L631.6 224.8L631.8 224.4L632.0 224.1L632.3 223.8L632.5 223.7L632.8 223.6L632.9 223.6L633.0 223.6L633.2 223.6L633.5 223.7L633.7 223.9L634.0 224.2L634.2 224.6L634.4 225.0L634.7 225.6L634.9 226.3L635.2 227.1L635.4 228.1L635.6 229.4L635.9 231.0L636.1 233.2L636.4 236.4L636.6 242.1L636.8 252.0L636.8 258.0L636.8 269.2L636.8 255.2L636.9 250.6L637.1 239.9L637.3 235.3L637.6 232.5L637.8 230.5L638.0 229.0L638.3 227.8L638.5 226.9L638.8 226.1L639.0 225.4L639.2 224.9L639.5 224.5L639.7 224.1L640.0 223.9L640.2 223.7L640.4 223.6L640.7 223.6L640.7 223.6L640.9 223.6L641.2 223.7L641.4 223.9L641.6 224.2L641.9 224.5L642.1 225.0L642.4 225.5L642.6 226.2L642.8 227.0L643.1 228.0L643.3 229.2L643.6 230.8L643.8 232.8L644.0 235.8L644.3 240.9L644.5 256.5" stroke="#7E2F8E" stroke-width="1.3"/></g><path d="M105.5 337.500v-2.500M105.5 122.500v2.500M145.5 337.500v-2.500M145.5 122.500v2.500M185.5 337.500v-2.500M185.5 122.500v2.500M225.5 337.500v-2.500M225.5 122.500v2.500M265.5 337.500v-2.500M265.5 122.500v2.500M305.5 337.500v-2.500M305.5 122.500v2.500M70.500 337.5h2.500M320.500 337.5h-2.500M70.500 302.5h2.500M320.500 302.5h-2.500M70.500 266.5h2.500M320.500 266.5h-2.500M70.500 230.5h2.500M320.500 230.5h-2.500M70.500 194.5h2.500M320.500 194.5h-2.500M70.500 158.5h2.500M320.500 158.5h-2.500M70.500 122.5h2.500M320.500 122.5h-2.500M398.5 337.500v-2.500M398.5 122.500v2.500M447.5 337.500v-2.500M447.5 122.500v2.500M496.5 337.500v-2.500M496.5 122.500v2.500M546.5 337.500v-2.500M546.5 122.500v2.500M595.5 337.500v-2.500M595.5 122.500v2.500M398.500 122.5h2.500M644.500 122.5h-2.500M398.500 165.5h2.500M644.500 165.5h-2.500M398.500 208.5h2.500M644.500 208.5h-2.500M398.500 251.5h2.500M644.500 251.5h-2.500M398.500 294.5h2.500M644.500 294.5h-2.500M398.500 337.5h2.500M644.500 337.5h-2.500" stroke="#262626" fill="none"/><rect x="70.500" y="122.500" width="250" height="215" fill="none" stroke="#262626"/><rect x="398.500" y="122.500" width="246" height="215" fill="none" stroke="#262626"/><rect x="546.500" y="135.500" width="84" height="60" fill="#fff" stroke="#262626"/><path d="M550.500 144.5H580.500" stroke="#0072BD" stroke-width="2.7"/><path d="M550.500 159.2H580.500" stroke="#D95319" stroke-width="1.3"/><path d="M550.500 173.7H580.500" stroke="#EDB120" stroke-width="1.3"/><path d="M550.500 188.5H580.500" stroke="#7E2F8E" stroke-width="1.3"/></svg>
<div class="t b" style="left:162.38px;top:106px;font-size:11px;transform:scale(0.9920,1);transform-origin:0 11px;">Time domain</div>
<div class="t b" style="left:472.76px;top:106px;font-size:11px;">Frequency domain</div>
<div class="t tk" style="left:171.50px;top:360px;font-size:11px;transform:scale(0.9936,1);transform-origin:0 11px;">Time (ms)</div>
<div class="t tk" style="left:483.49px;top:360px;font-size:11px;transform:scale(1.0120,1);transform-origin:0 11px;">Frequency (Hz)</div>
<div class="t tk gp" style="left:99.86px;top:346px;font-size:10px;letter-spacing:0.438px;">20</div>
<div class="t tk gp" style="left:140.00px;top:346px;font-size:10px;letter-spacing:0.438px;">40</div>
<div class="t tk gp" style="left:179.86px;top:346px;font-size:10px;letter-spacing:0.438px;">60</div>
<div class="t tk gp" style="left:219.90px;top:346px;font-size:10px;letter-spacing:0.438px;">80</div>
<div class="t tk gp" style="left:256.73px;top:346px;font-size:10px;letter-spacing:0.438px;">100</div>
<div class="t tk gp" style="left:296.73px;top:346px;font-size:10px;letter-spacing:0.438px;">120</div>
<div class="t tk gp" style="left:395.32px;top:346px;font-size:10px;letter-spacing:0.000px;">0</div>
<div class="t tk gp" style="left:441.31px;top:346px;font-size:10px;letter-spacing:0.438px;">50</div>
<div class="t tk gp" style="left:487.13px;top:346px;font-size:10px;letter-spacing:0.438px;">100</div>
<div class="t tk gp" style="left:537.13px;top:346px;font-size:10px;letter-spacing:0.438px;">150</div>
<div class="t tk gp" style="left:586.26px;top:346px;font-size:10px;letter-spacing:0.438px;">200</div>
<div class="t tk gp" style="left:46.95px;top:334px;font-size:10px;letter-spacing:0.442px;">-0.2</div>
<div class="t tk gp" style="left:58.73px;top:298px;font-size:10px;letter-spacing:0.000px;">0</div>
<div class="t tk gp" style="left:49.77px;top:262px;font-size:10px;letter-spacing:0.366px;">0.2</div>
<div class="t tk gp" style="left:49.56px;top:226px;font-size:10px;letter-spacing:0.366px;">0.4</div>
<div class="t tk gp" style="left:49.71px;top:190px;font-size:10px;letter-spacing:0.366px;">0.6</div>
<div class="t tk gp" style="left:49.70px;top:154px;font-size:10px;letter-spacing:0.366px;">0.8</div>
<div class="t tk gp" style="left:58.83px;top:118px;font-size:10px;letter-spacing:0.000px;">1</div>
<div class="t tk gp" style="left:381.53px;top:118px;font-size:10px;letter-spacing:0.438px;">50</div>
<div class="t tk gp" style="left:387.53px;top:161px;font-size:10px;letter-spacing:0.000px;">0</div>
<div class="t tk gp" style="left:377.61px;top:204px;font-size:10px;letter-spacing:0.516px;">-50</div>
<div class="t tk gp" style="left:371.59px;top:247px;font-size:10px;letter-spacing:0.496px;">-100</div>
<div class="t tk gp" style="left:371.59px;top:290px;font-size:10px;letter-spacing:0.496px;">-150</div>
<div class="t tk gp" style="left:371.59px;top:334px;font-size:10px;letter-spacing:0.496px;">-200</div>
<div class="t tk" style="left:39.00px;top:243.82px;font-size:11px;transform:rotate(-90deg) scaleX(1.0082);transform-origin:0 11px">Amplitude</div>
<div class="t tk" style="left:364.00px;top:257.11px;font-size:11px;transform:rotate(-90deg) scaleX(1.0106);transform-origin:0 11px">Magnitude (dB)</div>
<div class="t gp" style="left:582.78px;top:139px;font-size:10px;letter-spacing:0.029px;">Hamming</div>
<div class="t gp" style="left:582.78px;top:154px;font-size:10px;letter-spacing:0.009px;">Blackman</div>
<div class="t gp" style="left:582.78px;top:168px;font-size:10px;letter-spacing:0.021px;">Hann</div>
<div class="t gp" style="left:582.78px;top:183px;font-size:10px;letter-spacing:0.045px;">Flattop</div>
<div class="t st" style="left:75.61px;top:379px;font-size:11px;transform:scale(0.9844,1);transform-origin:0 11px;">Leakage Factor: 0.04 %</div>
<div class="t st" style="left:258.12px;top:379px;font-size:11px;transform:scale(0.9777,1);transform-origin:0 11px;">Relative sidelobe attenuation: -42.4 dB</div>
<div class="t st" style="left:488.00px;top:379px;font-size:11px;transform:scale(0.9938,1);transform-origin:0 11px;">Mainlobe width (-3dB): 10.254 Hz</div>
<div class="a panel" style="left:20px;top:415px;width:414px;height:205px;"></div>
<div class="a pt" style="left:26px;top:409px;width:65px;height:12px;"></div>
<div class="t" style="left:27.15px;top:410px;font-size:11px;transform:scale(1.0191,1);transform-origin:0 11px;">Window List</div>
<div class="t" style="left:38.19px;top:427px;font-size:11px;transform:scale(1.0269,1);transform-origin:0 11px;">Select windows to display:</div>
<div class="a" style="left:37px;top:445px;width:247px;height:164px;border:1px solid #828790;background:#fff"></div>
<div class="a" style="left:38px;top:446px;width:228px;height:56px;background:#3399ff"></div>
<div class="a" style="left:266px;top:446px;width:17px;height:162px;background:linear-gradient(90deg,#e6e6e6,#f0f0f0 25%,#f4f4f4)"></div>
<div class="a" style="left:38px;top:446px;width:228px;height:14px;border:1px dotted #c87a3a"></div>
<div class="t wh" style="left:38.62px;top:448px;font-size:10px;transform:scale(1.0671,1);transform-origin:0 10px;">Flattop</div>
<div class="t wh" style="left:38.61px;top:462px;font-size:10px;transform:scale(1.0831,1);transform-origin:0 10px;">Hann</div>
<div class="t wh" style="left:38.63px;top:476px;font-size:10px;transform:scale(1.0604,1);transform-origin:0 10px;">Blackman</div>
<div class="t wh" style="left:38.66px;top:490px;font-size:10px;transform:scale(1.0236,1);transform-origin:0 10px;">Hamming</div>
<svg class="a" style="left:266px;top:446px" width="17" height="162" viewBox="0 0 17 162"><path d="M5.700 11.100h7.300l-3.650-4.800z" fill="#3a3a3a"/><path d="M5.800 152h7.400l-3.700 4.200z" fill="#3a3a3a"/></svg>
<div class="a btn" style="left:300px;top:456px;width:121px;height:18px;"></div>
<div class="t" style="left:311.98px;top:459px;font-size:11px;transform:scale(1.0542,1);transform-origin:0 11px;">Add a new window</div>
<div class="a btn" style="left:300px;top:496px;width:121px;height:18px;"></div>
<div class="t" style="left:325.42px;top:499px;font-size:11px;transform:scale(1.0387,1);transform-origin:0 11px;">Copy window</div>
<div class="a btn" style="left:300px;top:536px;width:121px;height:18px;"></div>
<div class="t" style="left:312.68px;top:539px;font-size:11px;transform:scale(1.0310,1);transform-origin:0 11px;">Save to workspace</div>
<div class="a btn" style="left:300px;top:576px;width:121px;height:18px;"></div>
<div class="t" style="left:344.52px;top:579px;font-size:11px;transform:scale(0.9801,1);transform-origin:0 11px;">Delete</div>
<div class="a panel" style="left:447px;top:415px;width:231px;height:205px;"></div>
<div class="a pt" style="left:453px;top:409px;width:140px;height:12px;"></div>
<div class="t" style="left:453.95px;top:410px;font-size:11px;transform:scale(0.9914,1);transform-origin:0 11px;">Current Window Information</div>
<div class="t" style="left:458.93px;top:433px;font-size:11px;transform:scale(0.9642,1);transform-origin:0 10px;">Name:</div>
<div class="t" style="left:458.54px;top:455px;font-size:11px;transform:scale(1.0339,1);transform-origin:0 10px;">Type:</div>
<div class="t dis" style="left:458.90px;top:477px;font-size:11px;transform:scale(0.9942,1);transform-origin:0 10px;">MATLAB code:</div>
<div class="t" style="left:458.89px;top:499px;font-size:11px;">Length:</div>
<div class="t dis" style="left:458.93px;top:521px;font-size:11px;transform:scale(0.9695,1);transform-origin:0 10px;">Parameter:</div>
<div class="t dis" style="left:458.93px;top:543px;font-size:11px;transform:scale(0.9664,1);transform-origin:0 10px;">Parameter2:</div>
<div class="t" style="left:458.92px;top:565px;font-size:11px;transform:scale(0.9555,1);transform-origin:0 10px;">Sampling:</div>
<div class="a combo" style="left:568px;top:430px;width:102px;height:22px;"><div class="cbtn l"></div></div>
<div class="t" style="left:569.66px;top:435px;font-size:10px;transform:scale(1.0236,1);transform-origin:0 10px;">Hamming</div>
<div class="a combo" style="left:568px;top:452px;width:102px;height:22px;"><div class="cbtn"></div></div>
<div class="t" style="left:570.67px;top:458px;font-size:10px;transform:scale(1.0164,1);transform-origin:0 10px;">Hamming</div>
<div class="a editd" style="left:568px;top:474px;width:102px;height:18px;"></div>
<div class="a edit" style="left:628px;top:496px;width:42px;height:18px;"></div>
<div class="t" style="left:629.73px;top:498px;font-size:11px;transform:scale(1.0128,1);transform-origin:0 10px;">64</div>
<div class="a editd" style="left:628px;top:518px;width:42px;height:18px;"></div>
<div class="a editd" style="left:628px;top:540px;width:42px;height:18px;"></div>
<div class="a combo" style="left:568px;top:562px;width:102px;height:22px;"><div class="cbtn"></div></div>
<div class="t" style="left:570.92px;top:567px;font-size:11px;transform:scale(0.9657,1);transform-origin:0 10px;">Symmetric</div>
<div class="a btnd" style="left:530px;top:591px;width:68px;height:18px;"></div>
<div class="t" style="left:550.38px;top:594px;font-size:11px;color:#838383">Apply</div>
</body></html>
